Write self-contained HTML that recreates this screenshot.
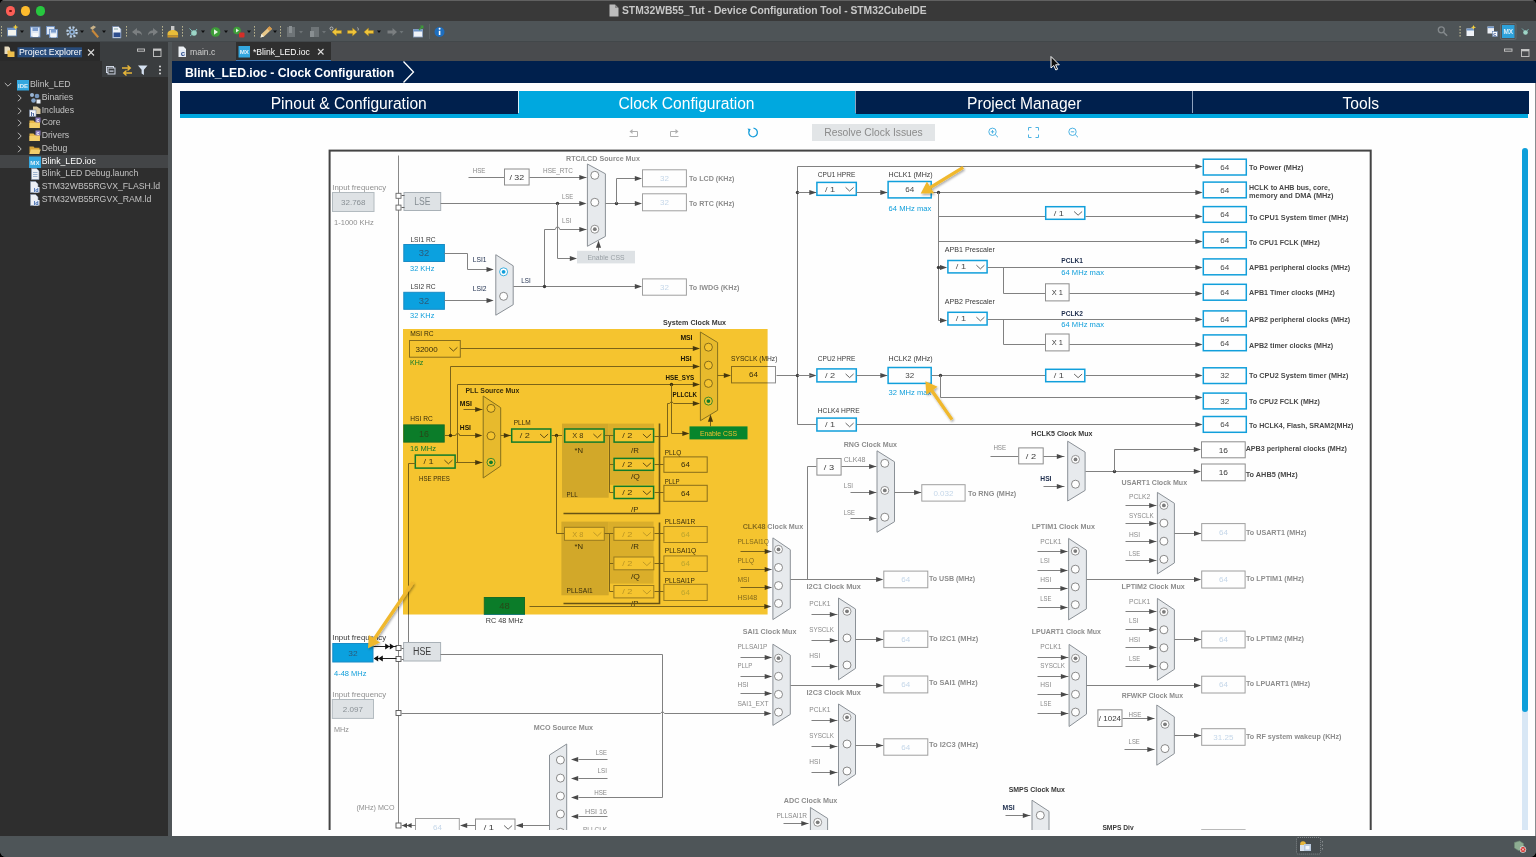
<!DOCTYPE html>
<html><head><meta charset="utf-8"><title>STM32CubeIDE</title>
<style>
*{box-sizing:border-box;margin:0;padding:0}
html,body{width:1536px;height:857px;overflow:hidden;background:#000}
body{font-family:"Liberation Sans",sans-serif;position:relative;color:#ccc}
.a{position:absolute}
.row,.t,.tab,#btn,.tx{will-change:transform}
#win{opacity:.9999;left:0;top:0;width:1536px;height:857px;background:#4f5558;border-radius:5px 5px 6px 6px;overflow:hidden}
#title{left:0;top:0;width:1536px;height:21.5px;background:#3a3a3a;border-top:1px solid #626262}
#title .t{left:622px;top:3.5px;font-size:10.3px;font-weight:700;color:#c9c9c9;white-space:nowrap;letter-spacing:0}
.tl{width:9.6px;height:9.6px;border-radius:50%;top:5.2px}
#toolbar{left:0;top:21px;width:1536px;height:21px;background:#4f5558;border-bottom:1px solid #43484b}
#side{left:0;top:42px;width:168px;height:794px;background:#2f2f2f}
#sidetab{left:0;top:42px;width:100px;height:19px;background:#2b2b2b}
#sidetabR{left:100px;top:42px;width:68px;height:19px;background:#3b3e40}
#sidetools{left:102px;top:61px;width:66px;height:16px;background:#3b3e40}
.row{left:0;width:168px;height:12.75px;font-size:8.7px;color:#c4c4c4;white-space:nowrap;line-height:12.75px}
.row span{position:absolute;top:0}
#gap{left:168px;top:42px;width:4px;height:794px;background:#515659}
#edtabs{left:172px;top:42px;width:1364px;height:19px;background:#4a4c4f}
#edtabA{left:235.5px;top:42px;width:95px;height:19px;background:#303030;border-bottom:1.5px solid #3f78b3}
#main{left:172px;top:61px;width:1364px;height:775px;background:#fff}
#navy{left:172px;top:61px;width:1364px;height:21.8px;background:#01214e}
#navy .t{left:13.3px;top:4.5px;font-size:12.2px;font-weight:700;color:#fff;white-space:nowrap}
#strip{left:180px;top:90.5px;width:1348px;height:27.3px;background:#00a9e0}
.tab{top:0;height:22.5px;background:#01214e;color:#fff;font-size:15.6px;text-align:center;line-height:25px;white-space:nowrap}
.tab.on{background:#00a9e0;height:27.3px}
.sepv{top:0;width:1px;height:22.5px;background:#d8f1fb}
#btn{left:811.6px;top:124px;width:123px;height:17px;background:#e3e6e8;color:#8c8c8c;font-size:10.3px;text-align:center;line-height:18.2px}
#status{left:0;top:836.5px;width:1536px;height:21px;background:#4f5659}
#track{left:1522.2px;top:160px;width:6.3px;height:669.5px;background:#d9e8f6}
#scroll{left:1522.2px;top:148px;width:6.3px;height:564px;background:#0fa0db;border-radius:3.2px}
</style></head>
<body>
<div id="win" class="a">
 <div id="title" class="a">
  <div class="a tl" style="left:5.8px;background:#fe5f57"></div>
  <div class="a" style="left:9.3px;top:8.7px;width:2.6px;height:2.6px;border-radius:50%;background:#7a1410"></div>
  <div class="a tl" style="left:20.7px;background:#febc2e"></div>
  <div class="a tl" style="left:35.6px;background:#28c840"></div>
  <svg class="a" style="left:609px;top:3px" width="10" height="13" viewBox="0 0 10 13"><path d="M0.5,0.5h5.5l3.5,3.5v8.5h-9z" fill="#bdbdbd"/><path d="M6,0.5v3.5h3.5z" fill="#8a8a8a"/></svg>
  <div class="a t">STM32WB55_Tut - Device Configuration Tool - STM32CubeIDE</div>
 </div>
 <div id="toolbar" class="a"><svg class="a" style="left:0;top:0" width="1536" height="21" viewBox="0 0 1536 21"><rect x="1" y="5" width="1" height="1.6" fill="#b9b48f"/><rect x="1" y="8" width="1" height="1.6" fill="#b9b48f"/><rect x="1" y="11" width="1" height="1.6" fill="#b9b48f"/><rect x="1" y="14" width="1" height="1.6" fill="#b9b48f"/><rect x="7.5" y="7" width="9" height="8" fill="#f4f4ee" stroke="#5d7fb0" stroke-width=".8"/><rect x="7.5" y="7" width="9" height="2" fill="#6f95c8"/><path d="M15.5,3.5l1,2 2,.5-2,.8-1,2-1-2-2-.8 2-.5z" fill="#f4d03f"/><path d="M20,9.5h4l-2,2.6z" fill="#111"/><rect x="30.5" y="6" width="9.5" height="10" fill="#dfe8f5" stroke="#6c8fc2" stroke-width=".9"/><rect x="32.5" y="6.5" width="5.5" height="3.5" fill="#7f9fd0"/><rect x="32.5" y="12" width="5.5" height="4" fill="#f6f8fb"/><rect x="46.5" y="5.5" width="8" height="8" fill="#dfe8f5" stroke="#6c8fc2" stroke-width=".8"/><rect x="49.5" y="8.5" width="8" height="8" fill="#dfe8f5" stroke="#6c8fc2" stroke-width=".8"/><rect x="51" y="9" width="5" height="2.6" fill="#7f9fd0"/><rect x="51" y="13" width="5" height="3.4" fill="#f6f8fb"/><circle cx="72" cy="11" r="4.6" fill="none" stroke="#b9cfe6" stroke-width="2.4" stroke-dasharray="2 1.6"/><circle cx="72" cy="11" r="3" fill="#8fb1d6"/><circle cx="72" cy="11" r="1.3" fill="#4f5558"/><path d="M80,9.5h4l-2,2.6z" fill="#111"/><path d="M90,7l3.5-2.5 2.5,1.5-3.5,3z" fill="#c9b38a"/><path d="M93,8.5l6,7-1.6,1.4-6-7z" fill="#c98a3c"/><path d="M102,9.5h4l-2,2.6z" fill="#111"/><path d="M112.5,5.5h6l2.5,2.5v9h-8.500z" fill="#f1f4f9" stroke="#6c84a8" stroke-width=".8"/><rect x="113.5" y="11.5" width="7" height="4.5" fill="#2f4f8f"/><rect x="114" y="7.5" width="4" height="1" fill="#8aa"/><rect x="126" y="5" width="1" height="1.6" fill="#b9b48f"/><rect x="126" y="8" width="1" height="1.6" fill="#b9b48f"/><rect x="126" y="11" width="1" height="1.6" fill="#b9b48f"/><rect x="126" y="14" width="1" height="1.6" fill="#b9b48f"/><path d="M132,11l5-4v2.5c3,0 5,1.5 5,5c-1-2-2.5-2.600-5-2.600v2.800z" fill="#7c8082"/><path d="M158,11l-5-4v2.500c-3,0-5,1.5-5,5c1-2 2.5-2.600 5-2.600v2.800z" fill="#7c8082"/><rect x="162" y="5" width="1" height="1.6" fill="#b9b48f"/><rect x="162" y="8" width="1" height="1.6" fill="#b9b48f"/><rect x="162" y="11" width="1" height="1.6" fill="#b9b48f"/><rect x="162" y="14" width="1" height="1.6" fill="#b9b48f"/><rect x="171" y="5" width="3.4" height="6" fill="#c9c9c9"/><path d="M167.5,13c0-3 3-4 5.300-4s5.300,1 5.300,4v1.500h-10.600z" fill="#e9bd3a"/><rect x="167.5" y="14.500" width="10.600" height="2" fill="#c9932a"/><rect x="182" y="5" width="1" height="1.6" fill="#b9b48f"/><rect x="182" y="8" width="1" height="1.6" fill="#b9b48f"/><rect x="182" y="11" width="1" height="1.6" fill="#b9b48f"/><rect x="182" y="14" width="1" height="1.6" fill="#b9b48f"/><circle cx="194" cy="12" r="2.800" fill="#9fd7c8"/><path d="M189.500,7.500l3,3M197,8l-2,2.500M190,15l2.500-2" stroke="#7fc4c0" stroke-width=".9"/><path d="M201,9.5h4l-2,2.6z" fill="#111"/><circle cx="215.500" cy="11" r="4.800" fill="#3f9e3a"/><path d="M214,8.200l4,2.800-4,2.800z" fill="#e9f6e6"/><path d="M224,9.5h4l-2,2.6z" fill="#111"/><circle cx="237" cy="9.500" r="3.800" fill="#3f9e3a"/><path d="M236,7.500l3,2-3,2z" fill="#e9f6e6"/><rect x="239" y="11.500" width="5.500" height="5" rx="1" fill="#d5302a"/><path d="M247,9.5h4l-2,2.6z" fill="#111"/><rect x="254" y="5" width="1" height="1.6" fill="#b9b48f"/><rect x="254" y="8" width="1" height="1.6" fill="#b9b48f"/><rect x="254" y="11" width="1" height="1.6" fill="#b9b48f"/><rect x="254" y="14" width="1" height="1.6" fill="#b9b48f"/><path d="M260.500,16.500l1-3.500 8-7.500 2.500,2.500-8,7.500z" fill="#e9c98a"/><path d="M260.500,16.500l1-3.500 2.500,2.500z" fill="#f6f1e0"/><path d="M267,7.500l2.500-2.300 2.500,2.500-2.500,2.300z" fill="#d99a4a"/><path d="M273,9.5h4l-2,2.6z" fill="#111"/><rect x="280" y="5" width="1" height="1.6" fill="#b9b48f"/><rect x="280" y="8" width="1" height="1.6" fill="#b9b48f"/><rect x="280" y="11" width="1" height="1.6" fill="#b9b48f"/><rect x="280" y="14" width="1" height="1.6" fill="#b9b48f"/><rect x="287" y="6" width="8" height="10" fill="#6f7578"/><rect x="289" y="5" width="3" height="7" fill="#8a9093"/><path d="M299,10h4l-2,2.400z" fill="#6f7578"/><rect x="311" y="6" width="8" height="10" fill="#6f7578"/><rect x="310" y="10" width="4" height="6" fill="#8a9093"/><path d="M322,10h4l-2,2.400z" fill="#6f7578"/><path d="M332,11l4.500-4v2.600h5v2.800h-5v2.600z" fill="#f2c73c" stroke="#a9811a" stroke-width=".4"/><circle cx="331.500" cy="7.500" r="1.500" fill="none" stroke="#ddd" stroke-width=".7"/><path d="M357,11l-4.500-4v2.600h-5v2.800h5v2.600z" fill="#f2c73c" stroke="#a9811a" stroke-width=".4"/><path d="M357,6.500a2,2 0 0 1 1,3" fill="none" stroke="#ccc" stroke-width=".7"/><path d="M364,11l4.500-4v2.600h5v2.800h-5v2.600z" fill="#f2c73c" stroke="#a9811a" stroke-width=".4"/><path d="M377,9.5h4l-2,2.6z" fill="#111"/><path d="M397,11l-4.500-4v2.600h-5v2.800h5v2.600z" fill="#7c8082"/><path d="M399.500,10h4l-2,2.400z" fill="#6f7578"/><rect x="413.500" y="8.500" width="9" height="7.500" fill="#f1f4f9" stroke="#8fa6c6" stroke-width=".8"/><rect x="413.500" y="8.500" width="9" height="2" fill="#6f95c8"/><path d="M419,9l3.500-3.500M420.300,5h2.500v2.500" stroke="#3f9e3a" stroke-width="1.200" fill="none"/><rect x="429" y="3" width="1" height="15" fill="#5e6467"/><circle cx="439.500" cy="11" r="5" fill="#1f6fbf"/><rect x="438.800" y="9.800" width="1.600" height="4.200" fill="#fff"/><circle cx="439.600" cy="7.800" r="1" fill="#fff"/><circle cx="1441.300" cy="8.800" r="3" fill="none" stroke="#858a8d" stroke-width="1.300"/><path d="M1443.500,11.200l3.600,3.600" stroke="#858a8d" stroke-width="1.600"/><rect x="1459.500" y="5" width="1.200" height="1.600" fill="#b9b48f"/><rect x="1459.500" y="8" width="1.200" height="1.600" fill="#b9b48f"/><rect x="1459.500" y="11" width="1.200" height="1.600" fill="#b9b48f"/><rect x="1459.500" y="14" width="1.200" height="1.600" fill="#b9b48f"/><rect x="1466.500" y="7.500" width="7.500" height="7.500" fill="#f1f4f9"/><rect x="1466.500" y="7.500" width="7.500" height="2" fill="#6f95c8"/><path d="M1473.500,4l.8,1.800 1.800,.5-1.800,.6-.8,1.800-.8-1.800-1.800-.6 1.800-.5z" fill="#f4d03f"/><rect x="1487.500" y="5.500" width="6.500" height="7" fill="#eef1f6"/><rect x="1487.500" y="5.500" width="6.500" height="1.600" fill="#6f95c8"/><rect x="1492.500" y="10.500" width="5" height="5" fill="#f6f8fb" stroke="#5e7fae" stroke-width=".6"/><text x="1493.300" y="14.800" font-size="5" font-weight="700" fill="#2f4f8f" font-family="Liberation Sans">c</text><rect x="1500.500" y="2.500" width="15.500" height="16" rx="1.500" fill="none" stroke="#6a7073" stroke-width=".8"/><rect x="1502" y="4" width="12.500" height="13" fill="#2fa3dc"/><text x="1508.300" y="13.300" font-size="6.500" font-weight="700" fill="#d9eef9" text-anchor="middle" font-family="Liberation Sans">MX</text><circle cx="1525.500" cy="11.500" r="2.300" fill="#9fd7c8"/><path d="M1522,7.500l2.500,2.500M1528.500,8l-1.500,2" stroke="#7fc4c0" stroke-width=".8"/></svg></div>
 <div id="side" class="a"></div>
 <div id="sidetab" class="a"></div>
 <div id="sidetabR" class="a"></div>
 <div id="sidetools" class="a"></div>
 <svg class="a" style="left:0;top:42px" width="172" height="36" viewBox="0 0 172 36"><path d="M4.500,4.500h4l1.500,1.500v6h-5.500z" fill="#e8dcc0"/><rect x="7.500" y="9.500" width="7" height="5.500" fill="#f0c04c"/><rect x="7.500" y="8.500" width="3" height="1.500" fill="#f0c04c"/><rect x="17.500" y="5.300" width="64.500" height="10" fill="#2a4d7c"/><path d="M88,7.500l6,6M94,7.500l-6,6" stroke="#ddd" stroke-width="1.100"/><rect x="137.500" y="7" width="7" height="2.200" fill="none" stroke="#c8c8c8" stroke-width=".9"/><rect x="153.500" y="7" width="7.500" height="7.500" fill="none" stroke="#c8c8c8" stroke-width=".9"/><rect x="153.500" y="7" width="7.500" height="1.800" fill="#c8c8c8"/><rect x="106.500" y="24.500" width="7" height="6" fill="none" stroke="#cfd6e4" stroke-width="1"/><rect x="108" y="26" width="7" height="6" fill="#3b3e40" stroke="#cfd6e4" stroke-width="1"/><rect x="109.500" y="28.500" width="4" height="1.200" fill="#cfd6e4"/><path d="M122,26h8M127.500,23.500l2.800,2.500-2.800,2.500M132,31h-8M126.500,28.500l-2.800,2.500 2.800,2.500" fill="none" stroke="#e8b73a" stroke-width="1.400"/><path d="M138,23.500h9.500l-3.600,4.300v5.200l-2.300-1.500v-3.700z" fill="#d6e2f2"/><circle cx="160" cy="24.500" r="1" fill="#ddd"/><circle cx="160" cy="28" r="1" fill="#ddd"/><circle cx="160" cy="31.500" r="1" fill="#ddd"/></svg><svg class="a" style="left:1512px;top:839px" width="18" height="16" viewBox="0 0 18 16"><path d="M2.500,3.500l5-1.500 4,2.500v5.500l-5,1.500-4-2.500z" fill="#8fae93" stroke="#6f8f76" stroke-width=".6"/><circle cx="11" cy="10.500" r="3.200" fill="#e8e8e8"/><circle cx="11" cy="10.500" r="2.500" fill="#d5302a"/><path d="M9.800,9.300l2.400,2.400M12.200,9.300l-2.400,2.400" stroke="#fff" stroke-width=".8"/></svg><div class="a tx" style="left:18.800px;top:46.500px;font-size:8.800px;color:#fff;white-space:nowrap">Project Explorer</div><div class="a row" style="top:78.00px;"><svg class="a" style="left:3.5px;top:3.500px" width="8" height="6"><path d="M.8,1l3.200,3.200 3.200-3.200" fill="none" stroke="#bbb" stroke-width="1"/></svg><svg class="a" style="left:16.5px;top:.500px" width="12" height="12" viewBox="0 0 12 12"><rect x="0" y="1" width="12" height="10.500" fill="#35a8e0"/><text x="6" y="8.800" font-size="6" font-weight="700" fill="#dff1fb" text-anchor="middle" font-family="Liberation Sans">IDE</text></svg><span style="left:30px">Blink_LED</span></div><div class="a row" style="top:90.75px;"><svg class="a" style="left:17.2px;top:2.500px" width="6" height="8"><path d="M1,.8l3.200,3.200-3.200,3.200" fill="none" stroke="#bbb" stroke-width="1"/></svg><svg class="a" style="left:28.6px;top:.500px" width="12" height="12" viewBox="0 0 12 12"><circle cx="3" cy="3" r="2" fill="#9db7d6"/><circle cx="8" cy="4" r="2.300" fill="#7a9ac2"/><circle cx="4.500" cy="8.500" r="2.300" fill="#86a6cc"/><rect x="7.500" y="7.500" width="4" height="4" fill="#e9eef5"/></svg><span style="left:41.7px">Binaries</span></div><div class="a row" style="top:103.50px;"><svg class="a" style="left:17.2px;top:2.500px" width="6" height="8"><path d="M1,.8l3.200,3.200-3.200,3.200" fill="none" stroke="#bbb" stroke-width="1"/></svg><svg class="a" style="left:28.6px;top:.500px" width="12" height="12" viewBox="0 0 12 12"><path d="M4,1.500h4l3.500,2.500v5h-7.500z" fill="#d9c9a0"/><rect x=".5" y="5" width="6.500" height="6.500" fill="#f4f6fa" stroke="#7a8aa6" stroke-width=".6"/><text x="3.700" y="10.500" font-size="6" font-weight="700" fill="#2f4f8f" text-anchor="middle" font-family="Liberation Sans">h</text></svg><span style="left:41.7px">Includes</span></div><div class="a row" style="top:116.25px;"><svg class="a" style="left:17.2px;top:2.500px" width="6" height="8"><path d="M1,.8l3.200,3.200-3.200,3.200" fill="none" stroke="#bbb" stroke-width="1"/></svg><svg class="a" style="left:28.6px;top:.500px" width="12" height="12" viewBox="0 0 12 12"><path d="M.5,3.500h4l1,1.200h5.500v6.300h-10.500z" fill="#e8b84a"/><path d="M.5,6h10.500l-.8,5h-9.700z" fill="#f4cf6c"/><rect x="6.500" y=".5" width="5" height="5" fill="#8d7fc0"/><text x="9" y="4.800" font-size="5" font-weight="700" fill="#fff" text-anchor="middle" font-family="Liberation Sans">c</text></svg><span style="left:41.7px">Core</span></div><div class="a row" style="top:129.00px;"><svg class="a" style="left:17.2px;top:2.500px" width="6" height="8"><path d="M1,.8l3.200,3.200-3.200,3.200" fill="none" stroke="#bbb" stroke-width="1"/></svg><svg class="a" style="left:28.6px;top:.500px" width="12" height="12" viewBox="0 0 12 12"><path d="M.5,3.500h4l1,1.200h5.500v6.300h-10.500z" fill="#e8b84a"/><path d="M.5,6h10.500l-.8,5h-9.700z" fill="#f4cf6c"/><rect x="6.500" y=".5" width="5" height="5" fill="#8d7fc0"/><text x="9" y="4.800" font-size="5" font-weight="700" fill="#fff" text-anchor="middle" font-family="Liberation Sans">c</text></svg><span style="left:41.7px">Drivers</span></div><div class="a row" style="top:141.75px;"><svg class="a" style="left:17.2px;top:2.500px" width="6" height="8"><path d="M1,.8l3.200,3.200-3.200,3.200" fill="none" stroke="#bbb" stroke-width="1"/></svg><svg class="a" style="left:28.6px;top:.500px" width="12" height="12" viewBox="0 0 12 12"><path d="M.5,3.500h4l1,1.200h5v6.300h-10z" fill="#d9a53a"/><path d="M2,6.500h9.800l-1.800,4.500h-9.500z" fill="#f4cf6c"/></svg><span style="left:41.7px">Debug</span></div><div class="a row" style="top:154.50px;background:#444648;color:#fff;"><svg class="a" style="left:28.6px;top:.500px" width="12" height="12" viewBox="0 0 12 12"><rect x="0" y=".5" width="12" height="11.500" fill="#35a8e0"/><text x="6" y="8.500" font-size="6.200" font-weight="700" fill="#dff1fb" text-anchor="middle" font-family="Liberation Sans">MX</text></svg><span style="left:41.7px">Blink_LED.ioc</span></div><div class="a row" style="top:167.25px;"><svg class="a" style="left:28.6px;top:.500px" width="12" height="12" viewBox="0 0 12 12"><path d="M2.500,.5h5l2.500,2.500v8.500h-7.500z" fill="#eef1f6" stroke="#8a9ab6" stroke-width=".6"/><path d="M4,4.500h4.500M4,6.500h4.500M4,8.500h4.500" stroke="#7a9ac2" stroke-width=".7"/></svg><span style="left:41.7px">Blink_LED Debug.launch</span></div><div class="a row" style="top:180.00px;"><svg class="a" style="left:28.6px;top:.500px" width="12" height="12" viewBox="0 0 12 12"><path d="M1.500,.5h5l2.500,2.500v8.500h-7.500z" fill="#eef1f6" stroke="#8a9ab6" stroke-width=".6"/><rect x="4.500" y="6" width="6" height="5.500" fill="#e9eef8"/><text x="7.300" y="10.800" font-size="5.500" font-weight="700" fill="#2f5fa8" text-anchor="middle" font-family="Liberation Sans">ld</text></svg><span style="left:41.7px">STM32WB55RGVX_FLASH.ld</span></div><div class="a row" style="top:192.75px;"><svg class="a" style="left:28.6px;top:.500px" width="12" height="12" viewBox="0 0 12 12"><path d="M1.500,.5h5l2.500,2.500v8.500h-7.500z" fill="#eef1f6" stroke="#8a9ab6" stroke-width=".6"/><rect x="4.500" y="6" width="6" height="5.500" fill="#e9eef8"/><text x="7.300" y="10.800" font-size="5.500" font-weight="700" fill="#2f5fa8" text-anchor="middle" font-family="Liberation Sans">ld</text></svg><span style="left:41.7px">STM32WB55RGVX_RAM.ld</span></div>
 <div id="gap" class="a"></div>
 <div id="edtabs" class="a"></div>
 <div id="edtabA" class="a"></div>
 <svg class="a" style="left:172px;top:42px" width="200" height="19" viewBox="0 0 200 19"><path d="M6.500,4.500h5l2.500,2.500v8h-7.500z" fill="#eef1f6"/><rect x="8" y="8" width="6" height="6.500" fill="#e6ecf6"/><text x="11" y="14" font-size="8" font-weight="700" fill="#2f4f8f" text-anchor="middle" font-family="Liberation Sans">c</text><rect x="66.500" y="4" width="11.500" height="11.500" fill="#35a8e0"/><text x="72.300" y="12.300" font-size="6.200" font-weight="700" fill="#dff1fb" text-anchor="middle" font-family="Liberation Sans">MX</text><path d="M146,7l5.500,5.500M151.500,7l-5.500,5.500" stroke="#ddd" stroke-width="1.100"/></svg><svg class="a" style="left:1512px;top:839px" width="18" height="16" viewBox="0 0 18 16"><path d="M2.500,3.500l5-1.500 4,2.500v5.500l-5,1.500-4-2.500z" fill="#8fae93" stroke="#6f8f76" stroke-width=".6"/><circle cx="11" cy="10.500" r="3.200" fill="#e8e8e8"/><circle cx="11" cy="10.500" r="2.500" fill="#d5302a"/><path d="M9.800,9.300l2.400,2.400M12.200,9.300l-2.400,2.400" stroke="#fff" stroke-width=".8"/></svg><div class="a tx" style="left:190.300px;top:47.400px;font-size:8.600px;color:#d0d0d0;white-space:nowrap">main.c</div><div class="a tx" style="left:253.300px;top:47.400px;font-size:8.600px;color:#fff;white-space:nowrap">*Blink_LED.ioc</div><svg class="a" style="left:1500px;top:42px" width="36" height="19" viewBox="0 0 36 19"><rect x="4.500" y="7" width="7.500" height="2.200" fill="none" stroke="#c8c8c8" stroke-width=".9"/><rect x="21.500" y="7.500" width="7.500" height="7" fill="none" stroke="#c8c8c8" stroke-width=".9"/><rect x="21.500" y="7.500" width="7.500" height="1.800" fill="#c8c8c8"/></svg>
 <div id="main" class="a"></div><div class="a" style="left:1535px;top:61px;width:1px;height:775px;background:#8a8d90"></div>
 <div id="navy" class="a"><div class="a t">Blink_LED.ioc - Clock Configuration</div>
  <svg class="a" style="left:229px;top:0" width="16" height="22" viewBox="0 0 16 22"><path d="M2.5,0.5 L12.5,11 L2.5,21.5" fill="none" stroke="#fff" stroke-width="1.3"/></svg>
 </div>
 <div id="strip" class="a">
  <div class="a tab" style="left:0;width:337.5px">Pinout &amp; Configuration</div>
  <div class="a tab on" style="left:338px;width:337px">Clock Configuration</div>
  <div class="a tab" style="left:675.5px;width:336.5px">Project Manager</div>
  <div class="a tab" style="left:1012.5px;width:335.5px">Tools</div>
  <div class="a sepv" style="left:337.7px"></div><div class="a sepv" style="left:675px;background:#8fa3bf"></div><div class="a sepv" style="left:1012px;background:#8fa3bf"></div>
 </div>
 <div id="btn" class="a">Resolve Clock Issues</div>
 <svg class="a" style="left:600px;top:118px" width="500" height="32" viewBox="0 0 500 32"><path d="M30,13.500h7.500v5h-8" fill="none" stroke="#b0b0b0" stroke-width="1"/><path d="M32.500,11l-3,2.500 3,2.500z" fill="#b0b0b0"/><path d="M78,13.500h-7.500v5h8" fill="none" stroke="#b0b0b0" stroke-width="1"/><path d="M75.500,11l3,2.500-3,2.500z" fill="#b0b0b0"/><path d="M153.500,10.200a4.300,4.300 0 1 1-4.200,2.200" fill="none" stroke="#1a9fdb" stroke-width="1.300"/><path d="M147.500,10.500l3.200,.6-1.300,2.800z" fill="#1a9fdb"/><circle cx="392.500" cy="13.800" r="3.700" fill="none" stroke="#4fb4e4" stroke-width="1"/><path d="M395.200,16.500l2.800,2.800M390.800,13.800h3.400M392.500,12.100v3.400" stroke="#4fb4e4" stroke-width="1"/><path d="M428.500,12.500v-3h3M435.500,9.500h3v3M438.500,16.500v3h-3M431.500,19.500h-3v-3" fill="none" stroke="#4fb4e4" stroke-width="1"/><circle cx="472.500" cy="13.800" r="3.700" fill="none" stroke="#4fb4e4" stroke-width="1"/><path d="M475.200,16.500l2.800,2.800M470.800,13.800h3.400" stroke="#4fb4e4" stroke-width="1"/></svg>
 <div id="track" class="a"></div><div id="scroll" class="a"></div>
 <svg width="1536" height="857" viewBox="0 0 1536 857" style="position:absolute;left:0;top:0" font-family="Liberation Sans, sans-serif">
<defs><clipPath id="vp"><rect x="328" y="149" width="1045" height="681"/></clipPath><filter id="sh" x="-30%" y="-30%" width="160%" height="160%"><feDropShadow dx="1" dy="1.5" stdDeviation="1.2" flood-color="#000" flood-opacity="0.35"/></filter></defs>
<g clip-path="url(#vp)">
<rect x="329.6" y="150.6" width="1041.1" height="700" fill="#fff" stroke="#454545" stroke-width="2"/>
<polyline points="398.5,155.5 398.5,826.5" fill="none" stroke="#8a8a8a" stroke-width="1"/>
<polyline points="408.5,463.5 408.5,643.5" fill="none" stroke="#808080" stroke-width="1"/>
<text x="332.3" y="190.02" font-size="7.0" fill="#909090" textLength="53.87" lengthAdjust="spacingAndGlyphs">Input frequency</text>
<rect x="332.5" y="192.5" width="41.5" height="19" fill="#dfe3e6" stroke="#b4bcc1" stroke-width="1" />
<text x="353.25" y="204.77" font-size="7.7" fill="#8a9196" text-anchor="middle" textLength="24.62" lengthAdjust="spacingAndGlyphs">32.768</text>
<text x="334" y="224.52" font-size="7.0" fill="#909090" textLength="39.77" lengthAdjust="spacingAndGlyphs">1-1000 KHz</text>
<rect x="404" y="192.5" width="36.7" height="18" fill="#dfe3e6" stroke="#aab2b8" stroke-width="1" />
<text x="422.3" y="205.1" font-size="10" fill="#868e94" text-anchor="middle" textLength="16.2" lengthAdjust="spacingAndGlyphs">LSE</text>
<rect x="396" y="193.3" width="5" height="5" fill="#fff" stroke="#666" stroke-width="0.9" />
<polyline points="401.5,195.5 404.5,195.5" fill="none" stroke="#666" stroke-width="1"/>
<rect x="396" y="205.1" width="5" height="5" fill="#fff" stroke="#666" stroke-width="0.9" />
<polyline points="401.5,207.5 404.5,207.5" fill="none" stroke="#666" stroke-width="1"/>
<text x="603" y="161.12" font-size="7.0" fill="#8e8e8e" font-weight="700" text-anchor="middle" textLength="73.83" lengthAdjust="spacingAndGlyphs">RTC/LCD Source Mux</text>
<text x="472.7" y="173.32" font-size="7.0" fill="#8a8a8a" textLength="12.74" lengthAdjust="spacingAndGlyphs">HSE</text>
<polyline points="468.5,177.5 504.5,177.5" fill="none" stroke="#828282" stroke-width="1"/>
<rect x="504.5" y="169" width="24.6" height="16" fill="#fff" stroke="#8e8e8e" stroke-width="1" />
<text x="516.8" y="179.77" font-size="7.7" fill="#3a3a3a" text-anchor="middle" textLength="14.71" lengthAdjust="spacingAndGlyphs">/ 32</text>
<text x="543" y="173.32" font-size="7.0" fill="#8a8a8a" textLength="29.79" lengthAdjust="spacingAndGlyphs">HSE_RTC</text>
<polyline points="529.5,177.5 586.5,177.5" fill="none" stroke="#828282" stroke-width="1"/>
<polygon points="586.5,177.5 579.3,174.9 579.3,180.1" fill="#4a4a4a"/>
<polygon points="587.4,164 605.4,173.8 605.4,236.4 587.4,246.3" fill="#e8ebee" stroke="#8c9298" stroke-width="1"/>
<circle cx="594.8" cy="175.3" r="4" fill="#fff" stroke="#707070" stroke-width="0.8"/>
<circle cx="594.8" cy="202.3" r="4" fill="#fff" stroke="#707070" stroke-width="0.8"/>
<circle cx="594.8" cy="229.2" r="4" fill="#fff" stroke="#7c7c7c" stroke-width="0.8"/>
<circle cx="594.8" cy="229.2" r="1.9" fill="#7c7c7c"/>
<polyline points="440.5,203.5 580.5,203.5" fill="none" stroke="#828282" stroke-width="1"/>
<polygon points="586.5,203.5 579.3,200.9 579.3,206.1" fill="#4a4a4a"/>
<circle cx="557.5" cy="203.5" r="1.7" fill="#3c3c3c"/>
<text x="562" y="199.32" font-size="7.0" fill="#8a8a8a" textLength="11.17" lengthAdjust="spacingAndGlyphs">LSE</text>
<text x="562" y="222.82" font-size="7.0" fill="#8a8a8a" textLength="9.4" lengthAdjust="spacingAndGlyphs">LSI</text>
<polyline points="544.5,286.5 544.5,229.5 555.5,229.5" fill="none" stroke="#828282" stroke-width="1"/>
<path d="M555.5,229 a2,2 0 0 1 4,0" fill="none" stroke="#828282"/>
<polyline points="559.5,229.5 586.5,229.5" fill="none" stroke="#828282" stroke-width="1"/>
<polygon points="586.5,229.5 579.3,226.9 579.3,232.1" fill="#4a4a4a"/>
<polyline points="557.5,203.5 557.5,258.5 570.5,258.5" fill="none" stroke="#828282" stroke-width="1"/>
<polygon points="577,258.5 569.8,255.9 569.8,261.1" fill="#4a4a4a"/>
<rect x="577" y="250.8" width="58" height="12.6" fill="#dfe3e6" stroke="none" stroke-width="1" />
<text x="606" y="259.6" font-size="7.0" fill="#9aa1a6" text-anchor="middle" textLength="37.16" lengthAdjust="spacingAndGlyphs">Enable CSS</text>
<polyline points="598.5,250.5 598.5,246.5" fill="none" stroke="#828282" stroke-width="1"/>
<polygon points="598.5,240.5 595.9,247.7 601.1,247.7" fill="#4a4a4a"/>
<polyline points="605.5,203.5 636.5,203.5" fill="none" stroke="#828282" stroke-width="1"/>
<polygon points="642,203.5 634.8,200.9 634.8,206.1" fill="#4a4a4a"/>
<circle cx="616.5" cy="203.5" r="1.7" fill="#3c3c3c"/>
<polyline points="616.5,203.5 616.5,178.5 636.5,178.5" fill="none" stroke="#828282" stroke-width="1"/>
<polygon points="642,178.5 634.8,175.9 634.8,181.1" fill="#4a4a4a"/>
<rect x="642.5" y="169.8" width="43.9" height="17" fill="#fff" stroke="#a0a0a0" stroke-width="1" />
<text x="664.45" y="181.07" font-size="7.7" fill="#c6d8ea" text-anchor="middle" textLength="8.95" lengthAdjust="spacingAndGlyphs">32</text>
<text x="689" y="180.82" font-size="7.0" fill="#8e8e8e" font-weight="700" textLength="45.45" lengthAdjust="spacingAndGlyphs">To LCD (KHz)</text>
<rect x="642.5" y="193.8" width="43.9" height="17" fill="#fff" stroke="#a0a0a0" stroke-width="1" />
<text x="664.45" y="205.07" font-size="7.7" fill="#c6d8ea" text-anchor="middle" textLength="8.95" lengthAdjust="spacingAndGlyphs">32</text>
<text x="689" y="205.82" font-size="7.0" fill="#8e8e8e" font-weight="700" textLength="45.42" lengthAdjust="spacingAndGlyphs">To RTC (KHz)</text>
<text x="410.4" y="242.12" font-size="7.0" fill="#3a3a3a" textLength="25.24" lengthAdjust="spacingAndGlyphs">LSI1 RC</text>
<rect x="403.8" y="244.5" width="40.6" height="17" fill="#0ca2e0" stroke="#1a8cc6" stroke-width="1" />
<text x="424.1" y="256.24" font-size="9" fill="#2b5d7c" text-anchor="middle" textLength="10.47" lengthAdjust="spacingAndGlyphs">32</text>
<text x="410" y="271.22" font-size="7.0" fill="#12a0dc" textLength="24.39" lengthAdjust="spacingAndGlyphs">32 KHz</text>
<text x="410.4" y="288.72" font-size="7.0" fill="#3a3a3a" textLength="25.24" lengthAdjust="spacingAndGlyphs">LSI2 RC</text>
<rect x="403.8" y="292.3" width="40.6" height="17" fill="#0ca2e0" stroke="#1a8cc6" stroke-width="1" />
<text x="424.1" y="304.04" font-size="9" fill="#2b5d7c" text-anchor="middle" textLength="10.47" lengthAdjust="spacingAndGlyphs">32</text>
<text x="410" y="318.12" font-size="7.0" fill="#12a0dc" textLength="24.39" lengthAdjust="spacingAndGlyphs">32 KHz</text>
<text x="472.7" y="261.52" font-size="7.0" fill="#1c2c4c" textLength="13.82" lengthAdjust="spacingAndGlyphs">LSI1</text>
<text x="472.7" y="290.82" font-size="7.0" fill="#1c2c4c" textLength="13.82" lengthAdjust="spacingAndGlyphs">LSI2</text>
<polyline points="444.5,253.5 467.5,253.5 467.5,269.5 488.5,269.5" fill="none" stroke="#828282" stroke-width="1"/>
<polygon points="493.7,269.5 486.5,266.9 486.5,272.1" fill="#4a4a4a"/>
<polyline points="444.5,300.5 488.5,300.5" fill="none" stroke="#828282" stroke-width="1"/>
<polygon points="493.7,300.5 486.5,297.9 486.5,303.1" fill="#4a4a4a"/>
<polygon points="495.8,254.7 513.2,265.8 513.2,304.7 495.8,315.2" fill="#e8ebee" stroke="#8c9298" stroke-width="1"/>
<circle cx="503.6" cy="271.8" r="4" fill="#fff" stroke="#12a0dc" stroke-width="0.8"/>
<circle cx="503.6" cy="271.8" r="1.9" fill="#12a0dc"/>
<circle cx="503.6" cy="296.3" r="4" fill="#fff" stroke="#707070" stroke-width="0.8"/>
<text x="521.3" y="283.32" font-size="7.0" fill="#1c2c4c" textLength="9.4" lengthAdjust="spacingAndGlyphs">LSI</text>
<polyline points="513.5,286.5 636.5,286.5" fill="none" stroke="#828282" stroke-width="1"/>
<polygon points="642,286.5 634.8,283.9 634.8,289.1" fill="#4a4a4a"/>
<circle cx="544.5" cy="286.5" r="1.7" fill="#3c3c3c"/>
<rect x="642.5" y="278.9" width="43.9" height="16.3" fill="#fff" stroke="#a0a0a0" stroke-width="1" />
<text x="664.45" y="289.82" font-size="7.7" fill="#c6d8ea" text-anchor="middle" textLength="8.95" lengthAdjust="spacingAndGlyphs">32</text>
<text x="689" y="289.52" font-size="7.0" fill="#8e8e8e" font-weight="700" textLength="50.42" lengthAdjust="spacingAndGlyphs">To IWDG (KHz)</text>
<text x="663" y="324.52" font-size="7.0" fill="#3a3a3a" font-weight="700" textLength="63.1" lengthAdjust="spacingAndGlyphs">System Clock Mux</text>
<text x="410.3" y="335.72" font-size="7.0" fill="#3a3a3a" textLength="23.29" lengthAdjust="spacingAndGlyphs">MSI RC</text>
<rect x="409.5" y="340.5" width="50.8" height="16.7" fill="#fff" stroke="#8e8e8e" stroke-width="1" />
<text x="426.61" y="351.62" font-size="7.7" fill="#3a3a3a" text-anchor="middle" textLength="22.39" lengthAdjust="spacingAndGlyphs">32000</text>
<polyline points="449.4,347.35 453.4,351.05 457.4,347.35" fill="none" stroke="#555" stroke-width="0.9"/>
<text x="410" y="364.52" font-size="7.0" fill="#12a0dc" textLength="13.33" lengthAdjust="spacingAndGlyphs">KHz</text>
<polyline points="460.5,348.5 694.5,348.5" fill="none" stroke="#828282" stroke-width="1"/>
<polygon points="700,348.5 692.8,345.9 692.8,351.1" fill="#4a4a4a"/>
<polygon points="700.4,332 717.6,342.5 717.6,410.3 700.4,420.7" fill="#f1f3f5" stroke="#8c9298" stroke-width="1"/>
<circle cx="708.4" cy="347.2" r="4" fill="#fff" stroke="#707070" stroke-width="0.8"/>
<circle cx="708.4" cy="365.2" r="4" fill="#fff" stroke="#707070" stroke-width="0.8"/>
<circle cx="708.4" cy="383.4" r="4" fill="#fff" stroke="#707070" stroke-width="0.8"/>
<circle cx="708.4" cy="401.1" r="4" fill="#fff" stroke="#12a0dc" stroke-width="0.8"/>
<circle cx="708.4" cy="401.1" r="1.9" fill="#12a0dc"/>
<text x="680.4" y="339.5" font-size="7.0" fill="#222" font-weight="700" textLength="12.11" lengthAdjust="spacingAndGlyphs">MSI</text>
<text x="680.4" y="361" font-size="7.0" fill="#222" font-weight="700" textLength="11.19" lengthAdjust="spacingAndGlyphs">HSI</text>
<text x="665.5" y="379.7" font-size="7.0" fill="#222" font-weight="700" textLength="28.67" lengthAdjust="spacingAndGlyphs">HSE_SYS</text>
<text x="672.6" y="397.3" font-size="7.0" fill="#222" font-weight="700" textLength="24.38" lengthAdjust="spacingAndGlyphs">PLLCLK</text>
<polyline points="450.5,435.5 450.5,366.5 694.5,366.5" fill="none" stroke="#828282" stroke-width="1"/>
<polygon points="700,366.5 692.8,363.9 692.8,369.1" fill="#4a4a4a"/>
<polyline points="457.5,462.5 457.5,384.5 694.5,384.5" fill="none" stroke="#828282" stroke-width="1"/>
<polygon points="700,384.5 692.8,381.9 692.8,387.1" fill="#4a4a4a"/>
<circle cx="671.5" cy="384.5" r="1.7" fill="#3c3c3c"/>
<polyline points="671.5,384.5 671.5,433.5 683.5,433.5" fill="none" stroke="#828282" stroke-width="1"/>
<polygon points="689.5,433.5 682.3,430.9 682.3,436.1" fill="#4a4a4a"/>
<polyline points="654.5,436.5 667.5,436.5 667.5,403.5 669.5,403.5" fill="none" stroke="#828282" stroke-width="1"/>
<path d="M669.5,403.5 l2,-2.200 l2,2.200" fill="none" stroke="#828282"/>
<polyline points="673.5,403.5 694.5,403.5" fill="none" stroke="#828282" stroke-width="1"/>
<polygon points="700,403.5 692.8,400.9 692.8,406.1" fill="#4a4a4a"/>
<polyline points="717.5,375.5 725.5,375.5" fill="none" stroke="#828282" stroke-width="1"/>
<polygon points="731,375.5 723.8,372.9 723.8,378.1" fill="#4a4a4a"/>
<text x="731" y="360.92" font-size="7.0" fill="#3a3a3a" textLength="46.38" lengthAdjust="spacingAndGlyphs">SYSCLK (MHz)</text>
<rect x="731.5" y="366.5" width="44" height="16.4" fill="#fff" stroke="#8e8e8e" stroke-width="1" />
<text x="753.5" y="377.47" font-size="7.7" fill="#3a3a3a" text-anchor="middle" textLength="8.95" lengthAdjust="spacingAndGlyphs">64</text>
<polyline points="776.5,375.5 797.5,375.5" fill="none" stroke="#828282" stroke-width="1"/>
<rect x="689.5" y="426.4" width="58" height="13" fill="#08aef0" stroke="none" stroke-width="1" />
<text x="718.5" y="435.5" font-size="7.0" fill="#eef6fb" text-anchor="middle" textLength="37.16" lengthAdjust="spacingAndGlyphs">Enable CSS</text>
<polyline points="710.5,426.5 710.5,420.5" fill="none" stroke="#828282" stroke-width="1"/>
<polygon points="710.5,414.5 707.9,421.7 713.1,421.7" fill="#4a4a4a"/>
<text x="465.5" y="393.22" font-size="7.0" fill="#3a3a3a" font-weight="700" textLength="53.88" lengthAdjust="spacingAndGlyphs">PLL Source Mux</text>
<text x="459.8" y="405.7" font-size="7.0" fill="#222" font-weight="700" textLength="12.11" lengthAdjust="spacingAndGlyphs">MSI</text>
<polyline points="463.5,409.5 482.5,409.5" fill="none" stroke="#828282" stroke-width="1"/>
<polygon points="482.4,409.5 475.2,406.9 475.2,412.1" fill="#4a4a4a"/>
<polygon points="483.2,396 500.7,407.7 500.7,466 483.2,478" fill="#f1f3f5" stroke="#8c9298" stroke-width="1"/>
<circle cx="491" cy="408.4" r="4" fill="#fff" stroke="#707070" stroke-width="0.8"/>
<circle cx="491" cy="435.8" r="4" fill="#fff" stroke="#707070" stroke-width="0.8"/>
<circle cx="491" cy="462.3" r="4" fill="#fff" stroke="#12a0dc" stroke-width="0.8"/>
<circle cx="491" cy="462.3" r="1.9" fill="#12a0dc"/>
<text x="410.3" y="420.52" font-size="7.0" fill="#3a3a3a" textLength="22.39" lengthAdjust="spacingAndGlyphs">HSI RC</text>
<rect x="403.8" y="424.9" width="40.4" height="17.2" fill="#0ca2e0" stroke="#1a8cc6" stroke-width="1" />
<text x="424" y="436.56" font-size="8.5" fill="#2b5d7c" text-anchor="middle" textLength="9.88" lengthAdjust="spacingAndGlyphs">16</text>
<text x="410" y="450.82" font-size="7.0" fill="#12a0dc" textLength="25.98" lengthAdjust="spacingAndGlyphs">16 MHz</text>
<polyline points="444.5,435.5 455.5,435.5" fill="none" stroke="#828282" stroke-width="1"/>
<path d="M455.7,435.5 a2,2 0 0 1 4,0" fill="none" stroke="#828282"/>
<polyline points="459.5,435.5 476.5,435.5" fill="none" stroke="#828282" stroke-width="1"/>
<polygon points="482.4,435.5 475.2,432.9 475.2,438.1" fill="#4a4a4a"/>
<circle cx="450.5" cy="435.5" r="1.7" fill="#3c3c3c"/>
<text x="459.8" y="429.7" font-size="7.0" fill="#222" font-weight="700" textLength="11.19" lengthAdjust="spacingAndGlyphs">HSI</text>
<rect x="415.3" y="455.1" width="39.8" height="13" fill="#fff" stroke="#12a0dc" stroke-width="1.5" />
<text x="428.61" y="464.37" font-size="7.7" fill="#4a4a4a" text-anchor="middle" textLength="10.24" lengthAdjust="spacingAndGlyphs">/ 1</text>
<polyline points="444.4,460.1 448.4,463.8 452.4,460.1" fill="none" stroke="#555" stroke-width="0.9"/>
<text x="419" y="480.52" font-size="7.0" fill="#3a3a3a" textLength="30.85" lengthAdjust="spacingAndGlyphs">HSE PRES</text>
<polyline points="408.5,463.5 415.5,463.5" fill="none" stroke="#828282" stroke-width="1"/>
<polyline points="455.5,462.5 482.5,462.5" fill="none" stroke="#828282" stroke-width="1"/>
<polygon points="482.4,462.5 475.2,459.9 475.2,465.1" fill="#4a4a4a"/>
<text x="513.7" y="425.02" font-size="7.0" fill="#3a3a3a" textLength="17.09" lengthAdjust="spacingAndGlyphs">PLLM</text>
<polyline points="500.5,435.5 511.5,435.5" fill="none" stroke="#828282" stroke-width="1"/>
<polygon points="511,435.5 503.8,432.9 503.8,438.1" fill="#4a4a4a"/>
<rect x="511.7" y="429" width="39.1" height="13.1" fill="#fff" stroke="#12a0dc" stroke-width="1.5" />
<text x="524.77" y="438.32" font-size="7.7" fill="#4a4a4a" text-anchor="middle" textLength="10.24" lengthAdjust="spacingAndGlyphs">/ 2</text>
<polyline points="540.1,434.05 544.1,437.75 548.1,434.05" fill="none" stroke="#555" stroke-width="0.9"/>
<polyline points="551.5,435.5 564.5,435.5" fill="none" stroke="#828282" stroke-width="1"/>
<circle cx="556.5" cy="435.5" r="1.7" fill="#3c3c3c"/>
<rect x="562" y="423.6" width="46.7" height="74.1" fill="#dbdbdb" stroke="none" stroke-width="1" />
<rect x="608.7" y="423.6" width="45.3" height="61.2" fill="#e3e3e3" stroke="none" stroke-width="1" />
<rect x="561.4" y="521.6" width="47.3" height="73.7" fill="#dbdbdb" stroke="none" stroke-width="1" />
<rect x="608.7" y="521.6" width="44.9" height="62" fill="#e3e3e3" stroke="none" stroke-width="1" />
<rect x="564.7" y="429" width="39.4" height="13.1" fill="#fff" stroke="#12a0dc" stroke-width="1.5" />
<text x="577.87" y="438.32" font-size="7.7" fill="#4a4a4a" text-anchor="middle" textLength="11.16" lengthAdjust="spacingAndGlyphs">X 8</text>
<polyline points="593.4,434.05 597.4,437.75 601.4,434.05" fill="none" stroke="#555" stroke-width="0.9"/>
<text x="574.4" y="453.12" font-size="7.0" fill="#3a3a3a" textLength="8.54" lengthAdjust="spacingAndGlyphs">*N</text>
<polyline points="604.5,435.5 613.5,435.5" fill="none" stroke="#828282" stroke-width="1"/>
<polyline points="609.5,435.5 609.5,492.5 613.5,492.5" fill="none" stroke="#828282" stroke-width="1"/>
<polyline points="609.5,464.5 613.5,464.5" fill="none" stroke="#828282" stroke-width="1"/>
<rect x="614.1" y="429" width="39.5" height="13.1" fill="#fff" stroke="#12a0dc" stroke-width="1.5" />
<text x="627.31" y="438.32" font-size="7.7" fill="#4a4a4a" text-anchor="middle" textLength="10.24" lengthAdjust="spacingAndGlyphs">/ 2</text>
<polyline points="642.9,434.05 646.9,437.75 650.9,434.05" fill="none" stroke="#555" stroke-width="0.9"/>
<text x="631" y="453.12" font-size="7.0" fill="#3a3a3a" textLength="7.84" lengthAdjust="spacingAndGlyphs">/R</text>
<rect x="614.1" y="458.4" width="39.5" height="11.9" fill="#fff" stroke="#12a0dc" stroke-width="1.5" />
<text x="627.31" y="467.12" font-size="7.7" fill="#4a4a4a" text-anchor="middle" textLength="10.24" lengthAdjust="spacingAndGlyphs">/ 2</text>
<polyline points="642.9,462.85 646.9,466.55 650.9,462.85" fill="none" stroke="#555" stroke-width="0.9"/>
<text x="631" y="479.22" font-size="7.0" fill="#3a3a3a" textLength="8.95" lengthAdjust="spacingAndGlyphs">/Q</text>
<rect x="614.1" y="486.3" width="39.5" height="12.2" fill="#fff" stroke="#12a0dc" stroke-width="1.5" />
<text x="627.31" y="495.17" font-size="7.7" fill="#4a4a4a" text-anchor="middle" textLength="10.24" lengthAdjust="spacingAndGlyphs">/ 2</text>
<polyline points="642.9,490.9 646.9,494.6 650.9,490.9" fill="none" stroke="#555" stroke-width="0.9"/>
<text x="631" y="511.52" font-size="7.0" fill="#3a3a3a" textLength="7.41" lengthAdjust="spacingAndGlyphs">/P</text>
<text x="664.7" y="454.52" font-size="7.0" fill="#3a3a3a" textLength="16.53" lengthAdjust="spacingAndGlyphs">PLLQ</text>
<rect x="663.9" y="456.9" width="43.3" height="15.4" fill="#fff" stroke="#8e8e8e" stroke-width="1" />
<text x="685.55" y="467.37" font-size="7.7" fill="#3a3a3a" text-anchor="middle" textLength="8.95" lengthAdjust="spacingAndGlyphs">64</text>
<text x="664.7" y="483.72" font-size="7.0" fill="#3a3a3a" textLength="14.98" lengthAdjust="spacingAndGlyphs">PLLP</text>
<rect x="663.9" y="485.3" width="43.3" height="16" fill="#fff" stroke="#8e8e8e" stroke-width="1" />
<text x="685.55" y="496.07" font-size="7.7" fill="#3a3a3a" text-anchor="middle" textLength="8.95" lengthAdjust="spacingAndGlyphs">64</text>
<polyline points="654.5,464.5 663.5,464.5" fill="none" stroke="#828282" stroke-width="1"/>
<polyline points="654.5,492.5 663.5,492.5" fill="none" stroke="#828282" stroke-width="1"/>
<text x="566.6" y="496.52" font-size="7.0" fill="#3a3a3a" textLength="11.05" lengthAdjust="spacingAndGlyphs">PLL</text>
<polyline points="563.5,513.5 659.5,513.5 659.5,423.5" fill="none" stroke="#6c6c6c" stroke-width="1.6"/>
<polyline points="556.5,435.5 556.5,533.5 564.5,533.5" fill="none" stroke="#828282" stroke-width="1"/>
<rect x="564.5" y="527.3" width="39.8" height="13" fill="#fff" stroke="#a0a0a0" stroke-width="1" />
<text x="577.87" y="536.57" font-size="7.7" fill="#c2c2c2" text-anchor="middle" textLength="11.16" lengthAdjust="spacingAndGlyphs">X 8</text>
<polyline points="593.4,532.3 597.4,536 601.4,532.3" fill="none" stroke="#c2c2c2" stroke-width="0.9"/>
<text x="574.4" y="548.82" font-size="7.0" fill="#3a3a3a" textLength="8.54" lengthAdjust="spacingAndGlyphs">*N</text>
<polyline points="604.5,533.5 613.5,533.5" fill="none" stroke="#828282" stroke-width="1"/>
<polyline points="609.5,533.5 609.5,591.5 613.5,591.5" fill="none" stroke="#828282" stroke-width="1"/>
<polyline points="609.5,563.5 613.5,563.5" fill="none" stroke="#828282" stroke-width="1"/>
<rect x="613.9" y="527.3" width="39.9" height="13" fill="#fff" stroke="#a0a0a0" stroke-width="1" />
<text x="627.31" y="536.57" font-size="7.7" fill="#c2c2c2" text-anchor="middle" textLength="10.24" lengthAdjust="spacingAndGlyphs">/ 2</text>
<polyline points="642.9,532.3 646.9,536 650.9,532.3" fill="none" stroke="#c2c2c2" stroke-width="0.9"/>
<text x="631" y="548.82" font-size="7.0" fill="#3a3a3a" textLength="7.84" lengthAdjust="spacingAndGlyphs">/R</text>
<rect x="613.9" y="557" width="39.9" height="12.8" fill="#fff" stroke="#a0a0a0" stroke-width="1" />
<text x="627.31" y="566.17" font-size="7.7" fill="#c2c2c2" text-anchor="middle" textLength="10.24" lengthAdjust="spacingAndGlyphs">/ 2</text>
<polyline points="642.9,561.9 646.9,565.6 650.9,561.9" fill="none" stroke="#c2c2c2" stroke-width="0.9"/>
<text x="631" y="578.52" font-size="7.0" fill="#3a3a3a" textLength="8.95" lengthAdjust="spacingAndGlyphs">/Q</text>
<rect x="613.9" y="585.5" width="39.9" height="12.4" fill="#fff" stroke="#a0a0a0" stroke-width="1" />
<text x="627.31" y="594.47" font-size="7.7" fill="#c2c2c2" text-anchor="middle" textLength="10.24" lengthAdjust="spacingAndGlyphs">/ 2</text>
<polyline points="642.9,590.2 646.9,593.9 650.9,590.2" fill="none" stroke="#c2c2c2" stroke-width="0.9"/>
<text x="631" y="605.52" font-size="7.0" fill="#3a3a3a" textLength="7.41" lengthAdjust="spacingAndGlyphs">/P</text>
<text x="664.7" y="523.82" font-size="7.0" fill="#3a3a3a" textLength="30.48" lengthAdjust="spacingAndGlyphs">PLLSAI1R</text>
<rect x="663.9" y="526.5" width="43.3" height="16" fill="#fff" stroke="#a0a0a0" stroke-width="1" />
<text x="685.55" y="537.27" font-size="7.7" fill="#c6d8ea" text-anchor="middle" textLength="8.95" lengthAdjust="spacingAndGlyphs">64</text>
<text x="664.7" y="552.52" font-size="7.0" fill="#3a3a3a" textLength="31.6" lengthAdjust="spacingAndGlyphs">PLLSAI1Q</text>
<rect x="663.9" y="555.9" width="43.3" height="15.6" fill="#fff" stroke="#a0a0a0" stroke-width="1" />
<text x="685.55" y="566.47" font-size="7.7" fill="#c6d8ea" text-anchor="middle" textLength="8.95" lengthAdjust="spacingAndGlyphs">64</text>
<text x="664.7" y="583.22" font-size="7.0" fill="#3a3a3a" textLength="30.05" lengthAdjust="spacingAndGlyphs">PLLSAI1P</text>
<rect x="663.9" y="584.3" width="43.3" height="16.2" fill="#fff" stroke="#a0a0a0" stroke-width="1" />
<text x="685.55" y="595.17" font-size="7.7" fill="#c6d8ea" text-anchor="middle" textLength="8.95" lengthAdjust="spacingAndGlyphs">64</text>
<polyline points="654.5,533.5 663.5,533.5" fill="none" stroke="#828282" stroke-width="1"/>
<polyline points="654.5,563.5 663.5,563.5" fill="none" stroke="#828282" stroke-width="1"/>
<polyline points="654.5,591.5 663.5,591.5" fill="none" stroke="#828282" stroke-width="1"/>
<text x="566.6" y="593.12" font-size="7.0" fill="#3a3a3a" textLength="26.12" lengthAdjust="spacingAndGlyphs">PLLSAI1</text>
<polyline points="563.5,603.5 659.5,603.5 659.5,522.5" fill="none" stroke="#6c6c6c" stroke-width="1.6"/>
<rect x="484.3" y="597.5" width="40.2" height="17" fill="#0ca2e0" stroke="#1a8cc6" stroke-width="1" />
<text x="504.4" y="609.24" font-size="9" fill="#2b5d7c" text-anchor="middle" textLength="10.47" lengthAdjust="spacingAndGlyphs">48</text>
<text x="485.8" y="623.22" font-size="7.0" fill="#3a3a3a" textLength="37.4" lengthAdjust="spacingAndGlyphs">RC 48 MHz</text>
<polyline points="529.5,606.5 765.5,606.5" fill="none" stroke="#828282" stroke-width="1"/>
<polygon points="771.5,606.5 764.3,603.9 764.3,609.1" fill="#4a4a4a"/>
<text x="332.3" y="640.12" font-size="7.0" fill="#3a3a3a" textLength="53.87" lengthAdjust="spacingAndGlyphs">Input frequency</text>
<rect x="332.8" y="643.5" width="40.2" height="18.5" fill="#0ca2e0" stroke="#1a8cc6" stroke-width="1" />
<text x="352.9" y="655.63" font-size="8" fill="#2b5d7c" text-anchor="middle" textLength="9.3" lengthAdjust="spacingAndGlyphs">32</text>
<text x="334" y="675.72" font-size="7.0" fill="#12a0dc" textLength="32.52" lengthAdjust="spacingAndGlyphs">4-48 MHz</text>
<text x="332.3" y="696.52" font-size="7.0" fill="#909090" textLength="53.87" lengthAdjust="spacingAndGlyphs">Input frequency</text>
<rect x="332.3" y="699.5" width="41.2" height="18.9" fill="#dfe3e6" stroke="#b4bcc1" stroke-width="1" />
<text x="352.9" y="711.72" font-size="7.7" fill="#8a9196" text-anchor="middle" textLength="20.15" lengthAdjust="spacingAndGlyphs">2.097</text>
<text x="334" y="731.92" font-size="7.0" fill="#909090" textLength="14.92" lengthAdjust="spacingAndGlyphs">MHz</text>
<rect x="403.6" y="642.5" width="37" height="18.5" fill="#dfe3e6" stroke="#aab2b8" stroke-width="1" />
<text x="422.1" y="655.4" font-size="10" fill="#3c3c3c" text-anchor="middle" textLength="18.2" lengthAdjust="spacingAndGlyphs">HSE</text>
<rect x="396" y="645.5" width="5" height="5" fill="#fff" stroke="#555" stroke-width="0.9" />
<polyline points="401.5,648.5 403.5,648.5" fill="none" stroke="#666" stroke-width="1"/>
<rect x="396" y="656.5" width="5" height="5" fill="#fff" stroke="#555" stroke-width="0.9" />
<polyline points="401.5,659.5 403.5,659.5" fill="none" stroke="#666" stroke-width="1"/>
<polyline points="373.5,646.5 396.5,646.5" fill="none" stroke="#222" stroke-width="1"/>
<polygon points="394.4,646.5 389.8,643.5 389.8,649.5" fill="#111"/>
<polygon points="389.8,646.5 385.2,643.5 385.2,649.5" fill="#111"/>
<polyline points="375.5,658.5 396.5,658.5" fill="none" stroke="#222" stroke-width="1"/>
<polygon points="373.6,658.5 378.2,655.5 378.2,661.5" fill="#111"/>
<polygon points="378.2,658.5 382.8,655.5 382.8,661.5" fill="#111"/>
<polyline points="440.5,654.5 662.5,654.5 662.5,797.5 578.5,797.5" fill="none" stroke="#828282" stroke-width="1"/>
<polygon points="571,797.5 578.2,794.9 578.2,800.1" fill="#4a4a4a"/>
<rect x="396" y="710.5" width="5" height="5" fill="#fff" stroke="#555" stroke-width="0.9" />
<polyline points="401.5,713.5 660.5,713.5" fill="none" stroke="#828282" stroke-width="1"/>
<path d="M660.5,713.5 l2,-2.200 l2,2.200" fill="none" stroke="#828282"/>
<polyline points="664.5,713.5 765.5,713.5" fill="none" stroke="#828282" stroke-width="1"/>
<polygon points="771.5,713.5 764.3,710.9 764.3,716.1" fill="#4a4a4a"/>
<text x="533.8" y="729.52" font-size="7.0" fill="#8e8e8e" font-weight="700" textLength="59.28" lengthAdjust="spacingAndGlyphs">MCO Source Mux</text>
<polygon points="549.5,755 566.7,744 566.7,870 549.5,860" fill="#e8ebee" stroke="#8c9298" stroke-width="1"/>
<circle cx="560.4" cy="760" r="4" fill="#fff" stroke="#707070" stroke-width="0.8"/>
<circle cx="560.4" cy="778.1" r="4" fill="#fff" stroke="#707070" stroke-width="0.8"/>
<circle cx="560.4" cy="796" r="4" fill="#fff" stroke="#707070" stroke-width="0.8"/>
<circle cx="560.4" cy="814" r="4" fill="#fff" stroke="#707070" stroke-width="0.8"/>
<circle cx="560.4" cy="832.3" r="4" fill="#fff" stroke="#707070" stroke-width="0.8"/>
<polyline points="607.5,759.5 578.5,759.5" fill="none" stroke="#828282" stroke-width="1"/>
<polygon points="571,759.5 578.2,756.9 578.2,762.1" fill="#4a4a4a"/>
<text x="607" y="754.62" font-size="7.0" fill="#8a8a8a" text-anchor="end" textLength="11.17" lengthAdjust="spacingAndGlyphs">LSE</text>
<polyline points="607.5,778.5 578.5,778.5" fill="none" stroke="#828282" stroke-width="1"/>
<polygon points="571,778.5 578.2,775.9 578.2,781.1" fill="#4a4a4a"/>
<text x="607" y="773.12" font-size="7.0" fill="#8a8a8a" text-anchor="end" textLength="9.4" lengthAdjust="spacingAndGlyphs">LSI</text>
<text x="607" y="795.22" font-size="7.0" fill="#8a8a8a" text-anchor="end" textLength="12.74" lengthAdjust="spacingAndGlyphs">HSE</text>
<polyline points="607.5,816.5 578.5,816.5" fill="none" stroke="#828282" stroke-width="1"/>
<polygon points="571,816.5 578.2,813.9 578.2,819.1" fill="#4a4a4a"/>
<text x="607" y="814.02" font-size="7.0" fill="#8a8a8a" text-anchor="end" textLength="22.03" lengthAdjust="spacingAndGlyphs">HSI 16</text>
<polyline points="607.5,835.5 578.5,835.5" fill="none" stroke="#828282" stroke-width="1"/>
<polygon points="571,835.5 578.2,832.9 578.2,838.1" fill="#4a4a4a"/>
<text x="607" y="831.82" font-size="7.0" fill="#8a8a8a" text-anchor="end" textLength="23.9" lengthAdjust="spacingAndGlyphs">PLLCLK</text>
<text x="356.5" y="810.32" font-size="7.0" fill="#909090" textLength="38.01" lengthAdjust="spacingAndGlyphs">(MHz) MCO</text>
<rect x="396" y="823" width="5" height="5" fill="#fff" stroke="#555" stroke-width="0.9" />
<rect x="415.5" y="818.5" width="43.8" height="17" fill="#fff" stroke="#a0a0a0" stroke-width="1" />
<text x="437.4" y="829.77" font-size="7.7" fill="#c6d8ea" text-anchor="middle" textLength="8.95" lengthAdjust="spacingAndGlyphs">64</text>
<rect x="475.5" y="819" width="39.5" height="16" fill="#fff" stroke="#8e8e8e" stroke-width="1" />
<text x="488.77" y="829.77" font-size="7.7" fill="#3a3a3a" text-anchor="middle" textLength="10.24" lengthAdjust="spacingAndGlyphs">/ 1</text>
<polyline points="504.1,825.5 508.1,829.2 512.1,825.5" fill="none" stroke="#555" stroke-width="0.9"/>
<polyline points="549.5,825.5 522.5,825.5" fill="none" stroke="#828282" stroke-width="1"/>
<polygon points="515.8,825.5 523,822.9 523,828.1" fill="#4a4a4a"/>
<polyline points="475.5,825.5 466.5,825.5" fill="none" stroke="#828282" stroke-width="1"/>
<polygon points="460,825.5 467.2,822.9 467.2,828.1" fill="#4a4a4a"/>
<polyline points="415.5,825.5 401.5,825.5" fill="none" stroke="#828282" stroke-width="1"/>
<polygon points="402,825.5 407,822.9 407,828.1" fill="#4a4a4a"/>
<polygon points="406.6,825.5 411.6,822.9 411.6,828.1" fill="#4a4a4a"/>
<polyline points="797.5,424.5 797.5,166.5 1196.5,166.5" fill="none" stroke="#828282" stroke-width="1"/>
<polygon points="1202.6,166.5 1195.4,163.9 1195.4,169.1" fill="#4a4a4a"/>
<circle cx="797.5" cy="192.5" r="1.7" fill="#3c3c3c"/>
<circle cx="797.5" cy="375.5" r="1.7" fill="#3c3c3c"/>
<text x="817.8" y="176.92" font-size="7.0" fill="#3a3a3a" textLength="37.51" lengthAdjust="spacingAndGlyphs">CPU1 HPRE</text>
<polyline points="797.5,192.5 816.5,192.5" fill="none" stroke="#828282" stroke-width="1"/>
<polygon points="816.5,192.5 809.3,189.9 809.3,195.1" fill="#4a4a4a"/>
<rect x="816.9" y="182.4" width="39.4" height="12.9" fill="#fff" stroke="#12a0dc" stroke-width="1.5" />
<text x="830.07" y="191.62" font-size="7.7" fill="#4a4a4a" text-anchor="middle" textLength="10.24" lengthAdjust="spacingAndGlyphs">/ 1</text>
<polyline points="845.6,187.35 849.6,191.05 853.6,187.35" fill="none" stroke="#555" stroke-width="0.9"/>
<polyline points="856.5,192.5 887.5,192.5" fill="none" stroke="#828282" stroke-width="1"/>
<polygon points="887.5,192.5 880.3,189.9 880.3,195.1" fill="#4a4a4a"/>
<text x="888.6" y="176.92" font-size="7.0" fill="#3a3a3a" textLength="44.06" lengthAdjust="spacingAndGlyphs">HCLK1 (MHz)</text>
<rect x="888.1" y="181.5" width="43.1" height="16.4" fill="#fff" stroke="#12a0dc" stroke-width="1.5" />
<text x="909.65" y="192.47" font-size="7.7" fill="#4a4a4a" text-anchor="middle" textLength="8.95" lengthAdjust="spacingAndGlyphs">64</text>
<text x="888.6" y="210.72" font-size="7.0" fill="#12a0dc" textLength="42.66" lengthAdjust="spacingAndGlyphs">64 MHz max</text>
<polyline points="931.5,192.5 1196.5,192.5" fill="none" stroke="#828282" stroke-width="1"/>
<polygon points="1202.6,192.5 1195.4,189.9 1195.4,195.1" fill="#4a4a4a"/>
<circle cx="938.5" cy="192.5" r="1.7" fill="#3c3c3c"/>
<polyline points="938.5,192.5 938.5,320.5 941.5,320.5" fill="none" stroke="#828282" stroke-width="1"/>
<polygon points="947.2,320.5 940,317.9 940,323.1" fill="#4a4a4a"/>
<polyline points="938.5,216.5 1045.5,216.5" fill="none" stroke="#828282" stroke-width="1"/>
<rect x="1045.7" y="206.7" width="39.1" height="12.6" fill="#fff" stroke="#12a0dc" stroke-width="1.5" />
<text x="1058.77" y="215.77" font-size="7.7" fill="#4a4a4a" text-anchor="middle" textLength="10.24" lengthAdjust="spacingAndGlyphs">/ 1</text>
<polyline points="1074.1,211.5 1078.1,215.2 1082.1,211.5" fill="none" stroke="#555" stroke-width="0.9"/>
<polyline points="1085.5,216.5 1196.5,216.5" fill="none" stroke="#828282" stroke-width="1"/>
<polygon points="1202.6,216.5 1195.4,213.9 1195.4,219.1" fill="#4a4a4a"/>
<polyline points="938.5,241.5 1196.5,241.5" fill="none" stroke="#828282" stroke-width="1"/>
<polygon points="1202.6,241.5 1195.4,238.9 1195.4,244.1" fill="#4a4a4a"/>
<text x="944.8" y="251.92" font-size="7.0" fill="#3a3a3a" textLength="50.11" lengthAdjust="spacingAndGlyphs">APB1 Prescaler</text>
<circle cx="938.5" cy="267.5" r="1.7" fill="#3c3c3c"/>
<polygon points="947.2,267.5 940,264.9 940,270.1" fill="#4a4a4a"/>
<rect x="947.9" y="260.5" width="39.2" height="12.4" fill="#fff" stroke="#12a0dc" stroke-width="1.5" />
<text x="961" y="269.47" font-size="7.7" fill="#4a4a4a" text-anchor="middle" textLength="10.24" lengthAdjust="spacingAndGlyphs">/ 1</text>
<polyline points="976.4,265.2 980.4,268.9 984.4,265.2" fill="none" stroke="#555" stroke-width="0.9"/>
<polyline points="987.5,267.5 1196.5,267.5" fill="none" stroke="#828282" stroke-width="1"/>
<polygon points="1202.6,267.5 1195.4,264.9 1195.4,270.1" fill="#4a4a4a"/>
<text x="1061.3" y="263.3" font-size="7.0" fill="#1c2c4c" font-weight="700" textLength="21.62" lengthAdjust="spacingAndGlyphs">PCLK1</text>
<text x="1061.3" y="274.52" font-size="7.0" fill="#12a0dc" textLength="42.66" lengthAdjust="spacingAndGlyphs">64 MHz max</text>
<polyline points="1003.5,267.5 1003.5,293.5 1045.5,293.5" fill="none" stroke="#828282" stroke-width="1"/>
<rect x="1045.5" y="283.8" width="23.6" height="17.1" fill="#fff" stroke="#8e8e8e" stroke-width="1" />
<text x="1057.3" y="295.12" font-size="7.7" fill="#3a3a3a" text-anchor="middle" textLength="11.16" lengthAdjust="spacingAndGlyphs">X 1</text>
<polyline points="1069.5,293.5 1196.5,293.5" fill="none" stroke="#828282" stroke-width="1"/>
<polygon points="1202.6,293.5 1195.4,290.9 1195.4,296.1" fill="#4a4a4a"/>
<text x="944.8" y="304.32" font-size="7.0" fill="#3a3a3a" textLength="50.11" lengthAdjust="spacingAndGlyphs">APB2 Prescaler</text>
<rect x="947.9" y="312.3" width="39.2" height="12.7" fill="#fff" stroke="#12a0dc" stroke-width="1.5" />
<text x="961" y="321.42" font-size="7.7" fill="#4a4a4a" text-anchor="middle" textLength="10.24" lengthAdjust="spacingAndGlyphs">/ 1</text>
<polyline points="976.4,317.15 980.4,320.85 984.4,317.15" fill="none" stroke="#555" stroke-width="0.9"/>
<polyline points="987.5,319.5 1196.5,319.5" fill="none" stroke="#828282" stroke-width="1"/>
<polygon points="1202.6,319.5 1195.4,316.9 1195.4,322.1" fill="#4a4a4a"/>
<text x="1061.3" y="316.1" font-size="7.0" fill="#1c2c4c" font-weight="700" textLength="21.62" lengthAdjust="spacingAndGlyphs">PCLK2</text>
<text x="1061.3" y="326.92" font-size="7.0" fill="#12a0dc" textLength="42.66" lengthAdjust="spacingAndGlyphs">64 MHz max</text>
<polyline points="1003.5,319.5 1003.5,344.5 1045.5,344.5" fill="none" stroke="#828282" stroke-width="1"/>
<rect x="1045.5" y="334" width="23.6" height="16.9" fill="#fff" stroke="#8e8e8e" stroke-width="1" />
<text x="1057.3" y="345.22" font-size="7.7" fill="#3a3a3a" text-anchor="middle" textLength="11.16" lengthAdjust="spacingAndGlyphs">X 1</text>
<polyline points="1069.5,344.5 1196.5,344.5" fill="none" stroke="#828282" stroke-width="1"/>
<polygon points="1202.6,344.5 1195.4,341.9 1195.4,347.1" fill="#4a4a4a"/>
<text x="817.8" y="360.72" font-size="7.0" fill="#3a3a3a" textLength="37.51" lengthAdjust="spacingAndGlyphs">CPU2 HPRE</text>
<polygon points="816.5,375.5 809.3,372.9 809.3,378.1" fill="#4a4a4a"/>
<polyline points="797.5,375.5 812.5,375.5" fill="none" stroke="#828282" stroke-width="1"/>
<rect x="816.9" y="368.9" width="39.4" height="13" fill="#fff" stroke="#12a0dc" stroke-width="1.5" />
<text x="830.07" y="378.17" font-size="7.7" fill="#4a4a4a" text-anchor="middle" textLength="10.24" lengthAdjust="spacingAndGlyphs">/ 2</text>
<polyline points="845.6,373.9 849.6,377.6 853.6,373.9" fill="none" stroke="#555" stroke-width="0.9"/>
<polyline points="856.5,375.5 887.5,375.5" fill="none" stroke="#828282" stroke-width="1"/>
<polygon points="887.5,375.5 880.3,372.9 880.3,378.1" fill="#4a4a4a"/>
<text x="888.6" y="360.72" font-size="7.0" fill="#3a3a3a" textLength="44.06" lengthAdjust="spacingAndGlyphs">HCLK2 (MHz)</text>
<rect x="888.1" y="367.5" width="43.1" height="15.9" fill="#fff" stroke="#12a0dc" stroke-width="1.5" />
<text x="909.65" y="378.22" font-size="7.7" fill="#4a4a4a" text-anchor="middle" textLength="8.95" lengthAdjust="spacingAndGlyphs">32</text>
<text x="888.6" y="394.52" font-size="7.0" fill="#12a0dc" textLength="42.66" lengthAdjust="spacingAndGlyphs">32 MHz max</text>
<polyline points="931.5,375.5 1045.5,375.5" fill="none" stroke="#828282" stroke-width="1"/>
<circle cx="940.5" cy="375.5" r="1.7" fill="#3c3c3c"/>
<rect x="1045.7" y="369.3" width="39.1" height="12.4" fill="#fff" stroke="#12a0dc" stroke-width="1.5" />
<text x="1058.77" y="378.27" font-size="7.7" fill="#4a4a4a" text-anchor="middle" textLength="10.24" lengthAdjust="spacingAndGlyphs">/ 1</text>
<polyline points="1074.1,374 1078.1,377.7 1082.1,374" fill="none" stroke="#555" stroke-width="0.9"/>
<polyline points="1085.5,375.5 1196.5,375.5" fill="none" stroke="#828282" stroke-width="1"/>
<polygon points="1202.6,375.5 1195.4,372.9 1195.4,378.1" fill="#4a4a4a"/>
<polyline points="940.5,375.5 940.5,397.5 1196.5,397.5" fill="none" stroke="#828282" stroke-width="1"/>
<polygon points="1202.6,397.5 1195.4,394.9 1195.4,400.1" fill="#4a4a4a"/>
<text x="817.8" y="413.12" font-size="7.0" fill="#3a3a3a" textLength="41.84" lengthAdjust="spacingAndGlyphs">HCLK4 HPRE</text>
<polyline points="797.5,424.5 816.5,424.5" fill="none" stroke="#828282" stroke-width="1"/>
<rect x="816.9" y="418.1" width="39.4" height="12.9" fill="#fff" stroke="#12a0dc" stroke-width="1.5" />
<text x="830.07" y="427.32" font-size="7.7" fill="#4a4a4a" text-anchor="middle" textLength="10.24" lengthAdjust="spacingAndGlyphs">/ 1</text>
<polyline points="845.6,423.05 849.6,426.75 853.6,423.05" fill="none" stroke="#555" stroke-width="0.9"/>
<polyline points="856.5,424.5 1196.5,424.5" fill="none" stroke="#828282" stroke-width="1"/>
<polygon points="1202.6,424.5 1195.4,421.9 1195.4,427.1" fill="#4a4a4a"/>
<rect x="1203.3" y="159.2" width="43" height="15.8" fill="#fff" stroke="#12a0dc" stroke-width="1.5" />
<text x="1224.8" y="169.87" font-size="7.7" fill="#4a4a4a" text-anchor="middle" textLength="8.95" lengthAdjust="spacingAndGlyphs">64</text>
<text x="1249" y="169.52" font-size="7.0" fill="#4a4a4a" font-weight="700" textLength="54.34" lengthAdjust="spacingAndGlyphs">To Power (MHz)</text>
<rect x="1203.3" y="182.1" width="43" height="15.7" fill="#fff" stroke="#12a0dc" stroke-width="1.5" />
<text x="1224.8" y="192.72" font-size="7.7" fill="#4a4a4a" text-anchor="middle" textLength="8.95" lengthAdjust="spacingAndGlyphs">64</text>
<rect x="1203.3" y="206.6" width="43" height="15.7" fill="#fff" stroke="#12a0dc" stroke-width="1.5" />
<text x="1224.8" y="217.22" font-size="7.7" fill="#4a4a4a" text-anchor="middle" textLength="8.95" lengthAdjust="spacingAndGlyphs">64</text>
<text x="1249" y="219.82" font-size="7.0" fill="#4a4a4a" font-weight="700" textLength="99.32" lengthAdjust="spacingAndGlyphs">To CPU1 System timer (MHz)</text>
<rect x="1203.3" y="231.9" width="43" height="15.9" fill="#fff" stroke="#12a0dc" stroke-width="1.5" />
<text x="1224.8" y="242.62" font-size="7.7" fill="#4a4a4a" text-anchor="middle" textLength="8.95" lengthAdjust="spacingAndGlyphs">64</text>
<text x="1249" y="244.52" font-size="7.0" fill="#4a4a4a" font-weight="700" textLength="70.76" lengthAdjust="spacingAndGlyphs">To CPU1 FCLK (MHz)</text>
<rect x="1203.3" y="258.9" width="43" height="15.9" fill="#fff" stroke="#12a0dc" stroke-width="1.5" />
<text x="1224.8" y="269.62" font-size="7.7" fill="#4a4a4a" text-anchor="middle" textLength="8.95" lengthAdjust="spacingAndGlyphs">64</text>
<text x="1249" y="270.12" font-size="7.0" fill="#4a4a4a" font-weight="700" textLength="101.22" lengthAdjust="spacingAndGlyphs">APB1 peripheral clocks (MHz)</text>
<rect x="1203.3" y="284.3" width="43" height="15.9" fill="#fff" stroke="#12a0dc" stroke-width="1.5" />
<text x="1224.8" y="295.02" font-size="7.7" fill="#4a4a4a" text-anchor="middle" textLength="8.95" lengthAdjust="spacingAndGlyphs">64</text>
<text x="1249" y="294.82" font-size="7.0" fill="#4a4a4a" font-weight="700" textLength="85.85" lengthAdjust="spacingAndGlyphs">APB1 Timer clocks (MHz)</text>
<rect x="1203.3" y="310.9" width="43" height="15.8" fill="#fff" stroke="#12a0dc" stroke-width="1.5" />
<text x="1224.8" y="321.57" font-size="7.7" fill="#4a4a4a" text-anchor="middle" textLength="8.95" lengthAdjust="spacingAndGlyphs">64</text>
<text x="1249" y="321.72" font-size="7.0" fill="#4a4a4a" font-weight="700" textLength="101.22" lengthAdjust="spacingAndGlyphs">APB2 peripheral clocks (MHz)</text>
<rect x="1203.3" y="334.9" width="43" height="15.8" fill="#fff" stroke="#12a0dc" stroke-width="1.5" />
<text x="1224.8" y="345.57" font-size="7.7" fill="#4a4a4a" text-anchor="middle" textLength="8.95" lengthAdjust="spacingAndGlyphs">64</text>
<text x="1249" y="348.22" font-size="7.0" fill="#4a4a4a" font-weight="700" textLength="84.09" lengthAdjust="spacingAndGlyphs">APB2 timer clocks (MHz)</text>
<rect x="1203.3" y="367.8" width="43" height="15.7" fill="#fff" stroke="#12a0dc" stroke-width="1.5" />
<text x="1224.8" y="378.42" font-size="7.7" fill="#4a4a4a" text-anchor="middle" textLength="8.95" lengthAdjust="spacingAndGlyphs">32</text>
<text x="1249" y="378.12" font-size="7.0" fill="#4a4a4a" font-weight="700" textLength="99.32" lengthAdjust="spacingAndGlyphs">To CPU2 System timer (MHz)</text>
<rect x="1203.3" y="393.1" width="43" height="15.8" fill="#fff" stroke="#12a0dc" stroke-width="1.5" />
<text x="1224.8" y="403.77" font-size="7.7" fill="#4a4a4a" text-anchor="middle" textLength="8.95" lengthAdjust="spacingAndGlyphs">32</text>
<text x="1249" y="404.22" font-size="7.0" fill="#4a4a4a" font-weight="700" textLength="70.76" lengthAdjust="spacingAndGlyphs">To CPU2 FCLK (MHz)</text>
<rect x="1203.3" y="416.5" width="43" height="15.8" fill="#fff" stroke="#12a0dc" stroke-width="1.5" />
<text x="1224.8" y="427.17" font-size="7.7" fill="#4a4a4a" text-anchor="middle" textLength="8.95" lengthAdjust="spacingAndGlyphs">64</text>
<text x="1249" y="427.72" font-size="7.0" fill="#4a4a4a" font-weight="700" textLength="104.47" lengthAdjust="spacingAndGlyphs">To HCLK4, Flash, SRAM2(MHz)</text>
<text x="1249" y="190.12" font-size="7.0" fill="#4a4a4a" font-weight="700" textLength="80.89" lengthAdjust="spacingAndGlyphs">HCLK to AHB bus, core,</text>
<text x="1249" y="197.92" font-size="7.0" fill="#4a4a4a" font-weight="700" textLength="84.52" lengthAdjust="spacingAndGlyphs">memory and DMA (MHz)</text>
<text x="1031.3" y="435.72" font-size="7.0" fill="#3a3a3a" font-weight="700" textLength="61.23" lengthAdjust="spacingAndGlyphs">HCLK5 Clock Mux</text>
<text x="993.4" y="449.52" font-size="7.0" fill="#8a8a8a" textLength="12.74" lengthAdjust="spacingAndGlyphs">HSE</text>
<polyline points="990.5,456.5 1018.5,456.5" fill="none" stroke="#828282" stroke-width="1"/>
<rect x="1018.7" y="447.9" width="24.5" height="16" fill="#fff" stroke="#8e8e8e" stroke-width="1" />
<text x="1030.95" y="458.67" font-size="7.7" fill="#3a3a3a" text-anchor="middle" textLength="10.24" lengthAdjust="spacingAndGlyphs">/ 2</text>
<polyline points="1043.5,456.5 1064.5,456.5" fill="none" stroke="#828282" stroke-width="1"/>
<polygon points="1064,456.5 1056.8,453.9 1056.8,459.1" fill="#4a4a4a"/>
<polygon points="1067.7,441.2 1085.1,452.1 1085.1,490.4 1067.7,501" fill="#e8ebee" stroke="#8c9298" stroke-width="1"/>
<circle cx="1075.5" cy="459.4" r="4" fill="#fff" stroke="#7c7c7c" stroke-width="0.8"/>
<circle cx="1075.5" cy="459.4" r="1.9" fill="#7c7c7c"/>
<circle cx="1075.5" cy="484.2" r="4" fill="#fff" stroke="#707070" stroke-width="0.8"/>
<text x="1040.3" y="481" font-size="7.0" fill="#1c2c4c" font-weight="700" textLength="11.19" lengthAdjust="spacingAndGlyphs">HSI</text>
<polyline points="1043.5,486.5 1064.5,486.5" fill="none" stroke="#828282" stroke-width="1"/>
<polygon points="1064,486.5 1056.8,483.9 1056.8,489.1" fill="#4a4a4a"/>
<polyline points="1085.5,471.5 1194.5,471.5" fill="none" stroke="#828282" stroke-width="1"/>
<polygon points="1201,471.5 1193.8,468.9 1193.8,474.1" fill="#4a4a4a"/>
<circle cx="1114.5" cy="471.5" r="1.7" fill="#3c3c3c"/>
<polyline points="1114.5,471.5 1114.5,449.5 1194.5,449.5" fill="none" stroke="#828282" stroke-width="1"/>
<polygon points="1201,449.5 1193.8,446.9 1193.8,452.1" fill="#4a4a4a"/>
<rect x="1201.5" y="441.8" width="43.7" height="16" fill="#fff" stroke="#8e8e8e" stroke-width="1" />
<text x="1223.35" y="452.68" font-size="8" fill="#3a3a3a" text-anchor="middle" textLength="9.3" lengthAdjust="spacingAndGlyphs">16</text>
<text x="1245.7" y="451.02" font-size="7.0" fill="#4a4a4a" font-weight="700" textLength="101.22" lengthAdjust="spacingAndGlyphs">APB3 peripheral clocks (MHz)</text>
<rect x="1201.5" y="464" width="43.7" height="16.8" fill="#fff" stroke="#8e8e8e" stroke-width="1" />
<text x="1223.35" y="475.28" font-size="8" fill="#3a3a3a" text-anchor="middle" textLength="9.3" lengthAdjust="spacingAndGlyphs">16</text>
<text x="1245.7" y="477.02" font-size="7.0" fill="#4a4a4a" font-weight="700" textLength="51.99" lengthAdjust="spacingAndGlyphs">To AHB5 (MHz)</text>
<text x="843.7" y="446.82" font-size="7.0" fill="#8e8e8e" font-weight="700" textLength="53.34" lengthAdjust="spacingAndGlyphs">RNG Clock Mux</text>
<polyline points="790.5,579.5 807.5,579.5 807.5,466.5 816.5,466.5" fill="none" stroke="#828282" stroke-width="1"/>
<rect x="816.9" y="458.5" width="24.2" height="16.6" fill="#fff" stroke="#8e8e8e" stroke-width="1" />
<text x="829" y="469.57" font-size="7.7" fill="#3a3a3a" text-anchor="middle" textLength="10.24" lengthAdjust="spacingAndGlyphs">/ 3</text>
<text x="843.7" y="461.92" font-size="7.0" fill="#8a8a8a" textLength="21.69" lengthAdjust="spacingAndGlyphs">CLK48</text>
<polyline points="841.5,466.5 876.5,466.5" fill="none" stroke="#828282" stroke-width="1"/>
<polygon points="876.3,466.5 869.1,463.9 869.1,469.1" fill="#4a4a4a"/>
<polygon points="877,450.8 894.5,461.8 894.5,521.7 877,532.3" fill="#e8ebee" stroke="#8c9298" stroke-width="1"/>
<circle cx="884.8" cy="463.3" r="4" fill="#fff" stroke="#707070" stroke-width="0.8"/>
<circle cx="884.8" cy="490.4" r="4" fill="#fff" stroke="#7c7c7c" stroke-width="0.8"/>
<circle cx="884.8" cy="490.4" r="1.9" fill="#7c7c7c"/>
<circle cx="884.8" cy="517.2" r="4" fill="#fff" stroke="#707070" stroke-width="0.8"/>
<text x="843.7" y="488.02" font-size="7.0" fill="#8a8a8a" textLength="9.4" lengthAdjust="spacingAndGlyphs">LSI</text>
<polyline points="850.5,492.5 876.5,492.5" fill="none" stroke="#828282" stroke-width="1"/>
<polygon points="876.3,492.5 869.1,489.9 869.1,495.1" fill="#4a4a4a"/>
<text x="843.7" y="514.52" font-size="7.0" fill="#8a8a8a" textLength="11.17" lengthAdjust="spacingAndGlyphs">LSE</text>
<polyline points="850.5,518.5 876.5,518.5" fill="none" stroke="#828282" stroke-width="1"/>
<polygon points="876.3,518.5 869.1,515.9 869.1,521.1" fill="#4a4a4a"/>
<polyline points="894.5,492.5 921.5,492.5" fill="none" stroke="#828282" stroke-width="1"/>
<polygon points="921.3,492.5 914.1,489.9 914.1,495.1" fill="#4a4a4a"/>
<rect x="921.8" y="484.7" width="43.3" height="16.4" fill="#fff" stroke="#a0a0a0" stroke-width="1" />
<text x="943.45" y="495.67" font-size="7.7" fill="#c6d8ea" text-anchor="middle" textLength="20.15" lengthAdjust="spacingAndGlyphs">0.032</text>
<text x="968" y="495.82" font-size="7.0" fill="#8e8e8e" font-weight="700" textLength="48.19" lengthAdjust="spacingAndGlyphs">To RNG (MHz)</text>
<text x="742.7" y="529.32" font-size="7.0" fill="#8e8e8e" font-weight="700" textLength="60.5" lengthAdjust="spacingAndGlyphs">CLK48 Clock Mux</text>
<polygon points="772.9,537.9 790.3,549.7 790.3,608.4 772.9,619.6" fill="#e8ebee" stroke="#8c9298" stroke-width="1"/>
<circle cx="778.5" cy="549.4" r="4" fill="#fff" stroke="#7c7c7c" stroke-width="0.8"/>
<circle cx="778.5" cy="549.4" r="1.9" fill="#7c7c7c"/>
<circle cx="778.5" cy="567.5" r="4" fill="#fff" stroke="#707070" stroke-width="0.8"/>
<circle cx="778.5" cy="585.6" r="4" fill="#fff" stroke="#707070" stroke-width="0.8"/>
<circle cx="778.5" cy="603.4" r="4" fill="#fff" stroke="#707070" stroke-width="0.8"/>
<text x="737.4" y="544.22" font-size="7.0" fill="#8a8a8a" textLength="31.6" lengthAdjust="spacingAndGlyphs">PLLSAI1Q</text>
<text x="737.4" y="562.92" font-size="7.0" fill="#8a8a8a" textLength="16.53" lengthAdjust="spacingAndGlyphs">PLLQ</text>
<text x="737.4" y="581.82" font-size="7.0" fill="#8a8a8a" textLength="11.87" lengthAdjust="spacingAndGlyphs">MSI</text>
<text x="737.4" y="600.42" font-size="7.0" fill="#8a8a8a" textLength="19.82" lengthAdjust="spacingAndGlyphs">HSI48</text>
<polyline points="740.5,551.5 771.5,551.5" fill="none" stroke="#828282" stroke-width="1"/>
<polygon points="771.9,551.5 764.7,548.9 764.7,554.1" fill="#4a4a4a"/>
<polyline points="740.5,569.5 771.5,569.5" fill="none" stroke="#828282" stroke-width="1"/>
<polygon points="771.9,569.5 764.7,566.9 764.7,572.1" fill="#4a4a4a"/>
<polyline points="740.5,587.5 771.5,587.5" fill="none" stroke="#828282" stroke-width="1"/>
<polygon points="771.9,587.5 764.7,584.9 764.7,590.1" fill="#4a4a4a"/>
<polyline points="790.5,579.5 877.5,579.5" fill="none" stroke="#828282" stroke-width="1"/>
<polygon points="883.3,579.5 876.1,576.9 876.1,582.1" fill="#4a4a4a"/>
<rect x="883.8" y="571.1" width="44" height="16.7" fill="#fff" stroke="#a0a0a0" stroke-width="1" />
<text x="905.8" y="582.22" font-size="7.7" fill="#c6d8ea" text-anchor="middle" textLength="8.95" lengthAdjust="spacingAndGlyphs">64</text>
<text x="929" y="580.52" font-size="7.0" fill="#8e8e8e" font-weight="700" textLength="46.2" lengthAdjust="spacingAndGlyphs">To USB (MHz)</text>
<text x="742.7" y="634.32" font-size="7.0" fill="#8e8e8e" font-weight="700" textLength="53.75" lengthAdjust="spacingAndGlyphs">SAI1 Clock Mux</text>
<polygon points="772.9,644.2 790.3,655.2 790.3,714.4 772.9,725.4" fill="#e8ebee" stroke="#8c9298" stroke-width="1"/>
<circle cx="778.5" cy="658.2" r="4" fill="#fff" stroke="#7c7c7c" stroke-width="0.8"/>
<circle cx="778.5" cy="658.2" r="1.9" fill="#7c7c7c"/>
<circle cx="778.5" cy="676.3" r="4" fill="#fff" stroke="#707070" stroke-width="0.8"/>
<circle cx="778.5" cy="694.4" r="4" fill="#fff" stroke="#707070" stroke-width="0.8"/>
<circle cx="778.5" cy="712.2" r="4" fill="#fff" stroke="#707070" stroke-width="0.8"/>
<text x="737.4" y="649.22" font-size="7.0" fill="#8a8a8a" textLength="30.05" lengthAdjust="spacingAndGlyphs">PLLSAI1P</text>
<text x="737.4" y="667.82" font-size="7.0" fill="#8a8a8a" textLength="14.98" lengthAdjust="spacingAndGlyphs">PLLP</text>
<text x="737.4" y="686.92" font-size="7.0" fill="#8a8a8a" textLength="10.97" lengthAdjust="spacingAndGlyphs">HSI</text>
<text x="737.4" y="705.62" font-size="7.0" fill="#8a8a8a" textLength="31.11" lengthAdjust="spacingAndGlyphs">SAI1_EXT</text>
<polyline points="740.5,657.5 771.5,657.5" fill="none" stroke="#828282" stroke-width="1"/>
<polygon points="771.9,657.5 764.7,654.9 764.7,660.1" fill="#4a4a4a"/>
<polyline points="740.5,676.5 771.5,676.5" fill="none" stroke="#828282" stroke-width="1"/>
<polygon points="771.9,676.5 764.7,673.9 764.7,679.1" fill="#4a4a4a"/>
<polyline points="740.5,693.5 771.5,693.5" fill="none" stroke="#828282" stroke-width="1"/>
<polygon points="771.9,693.5 764.7,690.9 764.7,696.1" fill="#4a4a4a"/>
<polyline points="790.5,685.5 877.5,685.5" fill="none" stroke="#828282" stroke-width="1"/>
<polygon points="883.3,685.5 876.1,682.9 876.1,688.1" fill="#4a4a4a"/>
<rect x="883.8" y="676" width="44" height="16.9" fill="#fff" stroke="#a0a0a0" stroke-width="1" />
<text x="905.8" y="687.22" font-size="7.7" fill="#c6d8ea" text-anchor="middle" textLength="8.95" lengthAdjust="spacingAndGlyphs">64</text>
<text x="929" y="685.02" font-size="7.0" fill="#8e8e8e" font-weight="700" textLength="48.59" lengthAdjust="spacingAndGlyphs">To SAI1 (MHz)</text>
<text x="1031.7" y="529.32" font-size="7.0" fill="#8e8e8e" font-weight="700" textLength="63.2" lengthAdjust="spacingAndGlyphs">LPTIM1 Clock Mux</text>
<polygon points="1068.6,538.4 1086.4,550.2 1086.4,608.9 1068.6,619.9" fill="#e8ebee" stroke="#8c9298" stroke-width="1"/>
<circle cx="1075.3" cy="551.1" r="4" fill="#fff" stroke="#7c7c7c" stroke-width="0.8"/>
<circle cx="1075.3" cy="551.1" r="1.9" fill="#7c7c7c"/>
<circle cx="1075.3" cy="569.2" r="4" fill="#fff" stroke="#707070" stroke-width="0.8"/>
<circle cx="1075.3" cy="586.9" r="4" fill="#fff" stroke="#707070" stroke-width="0.8"/>
<circle cx="1075.3" cy="604.7" r="4" fill="#fff" stroke="#707070" stroke-width="0.8"/>
<text x="1040.3" y="544.22" font-size="7.0" fill="#8a8a8a" textLength="21.2" lengthAdjust="spacingAndGlyphs">PCLK1</text>
<text x="1040.3" y="563.22" font-size="7.0" fill="#8a8a8a" textLength="9.4" lengthAdjust="spacingAndGlyphs">LSI</text>
<text x="1040.3" y="581.82" font-size="7.0" fill="#8a8a8a" textLength="10.97" lengthAdjust="spacingAndGlyphs">HSI</text>
<text x="1040.3" y="600.82" font-size="7.0" fill="#8a8a8a" textLength="11.17" lengthAdjust="spacingAndGlyphs">LSE</text>
<polyline points="1037.5,551.5 1067.5,551.5" fill="none" stroke="#828282" stroke-width="1"/>
<polygon points="1067.6,551.5 1060.4,548.9 1060.4,554.1" fill="#4a4a4a"/>
<polyline points="1037.5,570.5 1067.5,570.5" fill="none" stroke="#828282" stroke-width="1"/>
<polygon points="1067.6,570.5 1060.4,567.9 1060.4,573.1" fill="#4a4a4a"/>
<polyline points="1037.5,588.5 1067.5,588.5" fill="none" stroke="#828282" stroke-width="1"/>
<polygon points="1067.6,588.5 1060.4,585.9 1060.4,591.1" fill="#4a4a4a"/>
<polyline points="1037.5,607.5 1067.5,607.5" fill="none" stroke="#828282" stroke-width="1"/>
<polygon points="1067.6,607.5 1060.4,604.9 1060.4,610.1" fill="#4a4a4a"/>
<polyline points="1086.5,579.5 1194.5,579.5" fill="none" stroke="#828282" stroke-width="1"/>
<polygon points="1201.2,579.5 1194,576.9 1194,582.1" fill="#4a4a4a"/>
<rect x="1201.7" y="571" width="43.4" height="17.1" fill="#fff" stroke="#a0a0a0" stroke-width="1" />
<text x="1223.4" y="582.32" font-size="7.7" fill="#c6d8ea" text-anchor="middle" textLength="8.95" lengthAdjust="spacingAndGlyphs">64</text>
<text x="1246" y="580.52" font-size="7.0" fill="#8e8e8e" font-weight="700" textLength="58.04" lengthAdjust="spacingAndGlyphs">To LPTIM1 (MHz)</text>
<text x="1031.7" y="634.32" font-size="7.0" fill="#8e8e8e" font-weight="700" textLength="69.29" lengthAdjust="spacingAndGlyphs">LPUART1 Clock Mux</text>
<polygon points="1069.1,644.4 1086.5,656.2 1086.5,714.1 1069.1,726.5" fill="#e8ebee" stroke="#8c9298" stroke-width="1"/>
<circle cx="1075.5" cy="658.3" r="4" fill="#fff" stroke="#7c7c7c" stroke-width="0.8"/>
<circle cx="1075.5" cy="658.3" r="1.9" fill="#7c7c7c"/>
<circle cx="1075.5" cy="676.2" r="4" fill="#fff" stroke="#707070" stroke-width="0.8"/>
<circle cx="1075.5" cy="694.3" r="4" fill="#fff" stroke="#707070" stroke-width="0.8"/>
<circle cx="1075.5" cy="712.1" r="4" fill="#fff" stroke="#707070" stroke-width="0.8"/>
<text x="1040.3" y="649.42" font-size="7.0" fill="#8a8a8a" textLength="21.2" lengthAdjust="spacingAndGlyphs">PCLK1</text>
<text x="1040.3" y="668.02" font-size="7.0" fill="#8a8a8a" textLength="24.72" lengthAdjust="spacingAndGlyphs">SYSCLK</text>
<text x="1040.3" y="687.02" font-size="7.0" fill="#8a8a8a" textLength="10.97" lengthAdjust="spacingAndGlyphs">HSI</text>
<text x="1040.3" y="705.82" font-size="7.0" fill="#8a8a8a" textLength="11.17" lengthAdjust="spacingAndGlyphs">LSE</text>
<polyline points="1037.5,657.5 1068.5,657.5" fill="none" stroke="#828282" stroke-width="1"/>
<polygon points="1068.1,657.5 1060.9,654.9 1060.9,660.1" fill="#4a4a4a"/>
<polyline points="1037.5,676.5 1068.5,676.5" fill="none" stroke="#828282" stroke-width="1"/>
<polygon points="1068.1,676.5 1060.9,673.9 1060.9,679.1" fill="#4a4a4a"/>
<polyline points="1037.5,694.5 1068.5,694.5" fill="none" stroke="#828282" stroke-width="1"/>
<polygon points="1068.1,694.5 1060.9,691.9 1060.9,697.1" fill="#4a4a4a"/>
<polyline points="1037.5,713.5 1068.5,713.5" fill="none" stroke="#828282" stroke-width="1"/>
<polygon points="1068.1,713.5 1060.9,710.9 1060.9,716.1" fill="#4a4a4a"/>
<polyline points="1086.5,685.5 1194.5,685.5" fill="none" stroke="#828282" stroke-width="1"/>
<polygon points="1201.2,685.5 1194,682.9 1194,688.1" fill="#4a4a4a"/>
<rect x="1201.7" y="676.2" width="43.4" height="16.8" fill="#fff" stroke="#a0a0a0" stroke-width="1" />
<text x="1223.4" y="687.37" font-size="7.7" fill="#c6d8ea" text-anchor="middle" textLength="8.95" lengthAdjust="spacingAndGlyphs">64</text>
<text x="1246" y="685.52" font-size="7.0" fill="#8e8e8e" font-weight="700" textLength="64.14" lengthAdjust="spacingAndGlyphs">To LPUART1 (MHz)</text>
<text x="1121.6" y="484.52" font-size="7.0" fill="#8e8e8e" font-weight="700" textLength="65.53" lengthAdjust="spacingAndGlyphs">USART1 Clock Mux</text>
<polygon points="1157.4,492.4 1174.4,503.3 1174.4,562.9 1157.4,573.9" fill="#e8ebee" stroke="#8c9298" stroke-width="1"/>
<circle cx="1163.9" cy="505.4" r="4" fill="#fff" stroke="#7c7c7c" stroke-width="0.8"/>
<circle cx="1163.9" cy="505.4" r="1.9" fill="#7c7c7c"/>
<circle cx="1163.9" cy="523.1" r="4" fill="#fff" stroke="#707070" stroke-width="0.8"/>
<circle cx="1163.9" cy="541.2" r="4" fill="#fff" stroke="#707070" stroke-width="0.8"/>
<circle cx="1163.9" cy="559.3" r="4" fill="#fff" stroke="#707070" stroke-width="0.8"/>
<text x="1129" y="499.32" font-size="7.0" fill="#8a8a8a" textLength="21.2" lengthAdjust="spacingAndGlyphs">PCLK2</text>
<text x="1129" y="518.32" font-size="7.0" fill="#8a8a8a" textLength="24.72" lengthAdjust="spacingAndGlyphs">SYSCLK</text>
<text x="1129" y="537.02" font-size="7.0" fill="#8a8a8a" textLength="10.97" lengthAdjust="spacingAndGlyphs">HSI</text>
<text x="1129" y="555.92" font-size="7.0" fill="#8a8a8a" textLength="11.17" lengthAdjust="spacingAndGlyphs">LSE</text>
<polyline points="1125.5,505.5 1156.5,505.5" fill="none" stroke="#828282" stroke-width="1"/>
<polygon points="1156.4,505.5 1149.2,502.9 1149.2,508.1" fill="#4a4a4a"/>
<polyline points="1125.5,523.5 1156.5,523.5" fill="none" stroke="#828282" stroke-width="1"/>
<polygon points="1156.4,523.5 1149.2,520.9 1149.2,526.1" fill="#4a4a4a"/>
<polyline points="1125.5,541.5 1156.5,541.5" fill="none" stroke="#828282" stroke-width="1"/>
<polygon points="1156.4,541.5 1149.2,538.9 1149.2,544.1" fill="#4a4a4a"/>
<polyline points="1125.5,560.5 1156.5,560.5" fill="none" stroke="#828282" stroke-width="1"/>
<polygon points="1156.4,560.5 1149.2,557.9 1149.2,563.1" fill="#4a4a4a"/>
<polyline points="1174.5,533.5 1201.5,533.5" fill="none" stroke="#828282" stroke-width="1"/>
<polygon points="1201.2,533.5 1194,530.9 1194,536.1" fill="#4a4a4a"/>
<rect x="1201.7" y="523.6" width="43.4" height="17.1" fill="#fff" stroke="#a0a0a0" stroke-width="1" />
<text x="1223.4" y="534.92" font-size="7.7" fill="#c6d8ea" text-anchor="middle" textLength="8.95" lengthAdjust="spacingAndGlyphs">64</text>
<text x="1246" y="535.32" font-size="7.0" fill="#8e8e8e" font-weight="700" textLength="60.38" lengthAdjust="spacingAndGlyphs">To USART1 (MHz)</text>
<text x="1121.6" y="589.42" font-size="7.0" fill="#8e8e8e" font-weight="700" textLength="63.2" lengthAdjust="spacingAndGlyphs">LPTIM2 Clock Mux</text>
<polygon points="1157.4,598.4 1174.4,609.8 1174.4,669.3 1157.4,680.3" fill="#e8ebee" stroke="#8c9298" stroke-width="1"/>
<circle cx="1163.9" cy="611.8" r="4" fill="#fff" stroke="#7c7c7c" stroke-width="0.8"/>
<circle cx="1163.9" cy="611.8" r="1.9" fill="#7c7c7c"/>
<circle cx="1163.9" cy="629.8" r="4" fill="#fff" stroke="#707070" stroke-width="0.8"/>
<circle cx="1163.9" cy="647.8" r="4" fill="#fff" stroke="#707070" stroke-width="0.8"/>
<circle cx="1163.9" cy="665.9" r="4" fill="#fff" stroke="#707070" stroke-width="0.8"/>
<text x="1129" y="604.32" font-size="7.0" fill="#8a8a8a" textLength="21.2" lengthAdjust="spacingAndGlyphs">PCLK1</text>
<text x="1129" y="623.32" font-size="7.0" fill="#8a8a8a" textLength="9.4" lengthAdjust="spacingAndGlyphs">LSI</text>
<text x="1129" y="641.82" font-size="7.0" fill="#8a8a8a" textLength="10.97" lengthAdjust="spacingAndGlyphs">HSI</text>
<text x="1129" y="660.82" font-size="7.0" fill="#8a8a8a" textLength="11.17" lengthAdjust="spacingAndGlyphs">LSE</text>
<polyline points="1125.5,611.5 1156.5,611.5" fill="none" stroke="#828282" stroke-width="1"/>
<polygon points="1156.4,611.5 1149.2,608.9 1149.2,614.1" fill="#4a4a4a"/>
<polyline points="1125.5,629.5 1156.5,629.5" fill="none" stroke="#828282" stroke-width="1"/>
<polygon points="1156.4,629.5 1149.2,626.9 1149.2,632.1" fill="#4a4a4a"/>
<polyline points="1125.5,647.5 1156.5,647.5" fill="none" stroke="#828282" stroke-width="1"/>
<polygon points="1156.4,647.5 1149.2,644.9 1149.2,650.1" fill="#4a4a4a"/>
<polyline points="1125.5,666.5 1156.5,666.5" fill="none" stroke="#828282" stroke-width="1"/>
<polygon points="1156.4,666.5 1149.2,663.9 1149.2,669.1" fill="#4a4a4a"/>
<polyline points="1174.5,639.5 1201.5,639.5" fill="none" stroke="#828282" stroke-width="1"/>
<polygon points="1201.2,639.5 1194,636.9 1194,642.1" fill="#4a4a4a"/>
<rect x="1201.7" y="631.1" width="43.4" height="16.8" fill="#fff" stroke="#a0a0a0" stroke-width="1" />
<text x="1223.4" y="642.27" font-size="7.7" fill="#c6d8ea" text-anchor="middle" textLength="8.95" lengthAdjust="spacingAndGlyphs">64</text>
<text x="1246" y="640.52" font-size="7.0" fill="#8e8e8e" font-weight="700" textLength="58.04" lengthAdjust="spacingAndGlyphs">To LPTIM2 (MHz)</text>
<text x="806.5" y="589.32" font-size="7.0" fill="#8e8e8e" font-weight="700" textLength="54.42" lengthAdjust="spacingAndGlyphs">I2C1 Clock Mux</text>
<polygon points="838.5,598 855.5,609 855.5,668.4 838.5,679.8" fill="#e8ebee" stroke="#8c9298" stroke-width="1"/>
<circle cx="847" cy="611.3" r="4" fill="#fff" stroke="#7c7c7c" stroke-width="0.8"/>
<circle cx="847" cy="611.3" r="1.9" fill="#7c7c7c"/>
<circle cx="847" cy="638" r="4" fill="#fff" stroke="#707070" stroke-width="0.8"/>
<circle cx="847" cy="665" r="4" fill="#fff" stroke="#707070" stroke-width="0.8"/>
<text x="809.3" y="605.52" font-size="7.0" fill="#8a8a8a" textLength="21.2" lengthAdjust="spacingAndGlyphs">PCLK1</text>
<polyline points="811.5,614.5 837.5,614.5" fill="none" stroke="#828282" stroke-width="1"/>
<polygon points="837,614.5 829.8,611.9 829.8,617.1" fill="#4a4a4a"/>
<text x="809.3" y="631.52" font-size="7.0" fill="#8a8a8a" textLength="24.72" lengthAdjust="spacingAndGlyphs">SYSCLK</text>
<polyline points="811.5,640.5 837.5,640.5" fill="none" stroke="#828282" stroke-width="1"/>
<polygon points="837,640.5 829.8,637.9 829.8,643.1" fill="#4a4a4a"/>
<text x="809.3" y="657.52" font-size="7.0" fill="#8a8a8a" textLength="10.97" lengthAdjust="spacingAndGlyphs">HSI</text>
<polyline points="811.5,666.5 837.5,666.5" fill="none" stroke="#828282" stroke-width="1"/>
<polygon points="837,666.5 829.8,663.9 829.8,669.1" fill="#4a4a4a"/>
<polyline points="855.5,639.5 883.5,639.5" fill="none" stroke="#828282" stroke-width="1"/>
<polygon points="883.3,639.5 876.1,636.9 876.1,642.1" fill="#4a4a4a"/>
<rect x="883.8" y="631" width="44" height="16.4" fill="#fff" stroke="#a0a0a0" stroke-width="1" />
<text x="905.8" y="641.97" font-size="7.7" fill="#c6d8ea" text-anchor="middle" textLength="8.95" lengthAdjust="spacingAndGlyphs">64</text>
<text x="929" y="640.82" font-size="7.0" fill="#8e8e8e" font-weight="700" textLength="49.27" lengthAdjust="spacingAndGlyphs">To I2C1 (MHz)</text>
<text x="806.5" y="695.32" font-size="7.0" fill="#8e8e8e" font-weight="700" textLength="54.42" lengthAdjust="spacingAndGlyphs">I2C3 Clock Mux</text>
<polygon points="838.5,704 855.5,715 855.5,774.4 838.5,785.8" fill="#e8ebee" stroke="#8c9298" stroke-width="1"/>
<circle cx="847" cy="717.3" r="4" fill="#fff" stroke="#7c7c7c" stroke-width="0.8"/>
<circle cx="847" cy="717.3" r="1.9" fill="#7c7c7c"/>
<circle cx="847" cy="744" r="4" fill="#fff" stroke="#707070" stroke-width="0.8"/>
<circle cx="847" cy="771" r="4" fill="#fff" stroke="#707070" stroke-width="0.8"/>
<text x="809.3" y="711.52" font-size="7.0" fill="#8a8a8a" textLength="21.2" lengthAdjust="spacingAndGlyphs">PCLK1</text>
<polyline points="811.5,720.5 837.5,720.5" fill="none" stroke="#828282" stroke-width="1"/>
<polygon points="837,720.5 829.8,717.9 829.8,723.1" fill="#4a4a4a"/>
<text x="809.3" y="737.52" font-size="7.0" fill="#8a8a8a" textLength="24.72" lengthAdjust="spacingAndGlyphs">SYSCLK</text>
<polyline points="811.5,746.5 837.5,746.5" fill="none" stroke="#828282" stroke-width="1"/>
<polygon points="837,746.5 829.8,743.9 829.8,749.1" fill="#4a4a4a"/>
<text x="809.3" y="763.52" font-size="7.0" fill="#8a8a8a" textLength="10.97" lengthAdjust="spacingAndGlyphs">HSI</text>
<polyline points="811.5,772.5 837.5,772.5" fill="none" stroke="#828282" stroke-width="1"/>
<polygon points="837,772.5 829.8,769.9 829.8,775.1" fill="#4a4a4a"/>
<polyline points="855.5,745.5 883.5,745.5" fill="none" stroke="#828282" stroke-width="1"/>
<polygon points="883.3,745.5 876.1,742.9 876.1,748.1" fill="#4a4a4a"/>
<rect x="883.8" y="738.8" width="44" height="16.4" fill="#fff" stroke="#a0a0a0" stroke-width="1" />
<text x="905.8" y="749.77" font-size="7.7" fill="#c6d8ea" text-anchor="middle" textLength="8.95" lengthAdjust="spacingAndGlyphs">64</text>
<text x="929" y="746.82" font-size="7.0" fill="#8e8e8e" font-weight="700" textLength="49.27" lengthAdjust="spacingAndGlyphs">To I2C3 (MHz)</text>
<text x="1121.7" y="698.02" font-size="7.0" fill="#8e8e8e" font-weight="700" textLength="61.35" lengthAdjust="spacingAndGlyphs">RFWKP Clock Mux</text>
<rect x="1097.9" y="709.8" width="24.1" height="16.7" fill="#fff" stroke="#8e8e8e" stroke-width="1" />
<text x="1109.95" y="720.74" font-size="7.2" fill="#3a3a3a" text-anchor="middle" textLength="22.13" lengthAdjust="spacingAndGlyphs">/ 1024</text>
<text x="1128.6" y="717.12" font-size="7.0" fill="#8a8a8a" textLength="12.74" lengthAdjust="spacingAndGlyphs">HSE</text>
<polyline points="1122.5,718.5 1154.5,718.5" fill="none" stroke="#828282" stroke-width="1"/>
<polygon points="1154.5,718.5 1147.3,715.9 1147.3,721.1" fill="#4a4a4a"/>
<polygon points="1156.8,705 1174.3,716.8 1174.3,753.6 1156.8,765.2" fill="#e8ebee" stroke="#8c9298" stroke-width="1"/>
<circle cx="1165" cy="724.3" r="4" fill="#fff" stroke="#7c7c7c" stroke-width="0.8"/>
<circle cx="1165" cy="724.3" r="1.9" fill="#7c7c7c"/>
<circle cx="1165" cy="748.6" r="4" fill="#fff" stroke="#707070" stroke-width="0.8"/>
<text x="1128.6" y="743.52" font-size="7.0" fill="#8a8a8a" textLength="11.17" lengthAdjust="spacingAndGlyphs">LSE</text>
<polyline points="1124.5,749.5 1154.5,749.5" fill="none" stroke="#828282" stroke-width="1"/>
<polygon points="1154.5,749.5 1147.3,746.9 1147.3,752.1" fill="#4a4a4a"/>
<polyline points="1174.5,735.5 1201.5,735.5" fill="none" stroke="#828282" stroke-width="1"/>
<polygon points="1201.2,735.5 1194,732.9 1194,738.1" fill="#4a4a4a"/>
<rect x="1201.7" y="728.7" width="43.4" height="16.6" fill="#fff" stroke="#a0a0a0" stroke-width="1" />
<text x="1223.4" y="739.77" font-size="7.7" fill="#c6d8ea" text-anchor="middle" textLength="20.15" lengthAdjust="spacingAndGlyphs">31.25</text>
<text x="1246" y="739.22" font-size="7.0" fill="#8e8e8e" font-weight="700" textLength="95.5" lengthAdjust="spacingAndGlyphs">To RF system wakeup (KHz)</text>
<text x="783.8" y="802.72" font-size="7.0" fill="#8e8e8e" font-weight="700" textLength="53.5" lengthAdjust="spacingAndGlyphs">ADC Clock Mux</text>
<text x="776.5" y="817.82" font-size="7.0" fill="#8a8a8a" textLength="30.48" lengthAdjust="spacingAndGlyphs">PLLSAI1R</text>
<polyline points="783.5,823.5 808.5,823.5" fill="none" stroke="#828282" stroke-width="1"/>
<polygon points="808.5,823.5 801.3,820.9 801.3,826.1" fill="#4a4a4a"/>
<polygon points="810.4,807.5 827.6,818.4 827.6,880 810.4,890" fill="#e8ebee" stroke="#8c9298" stroke-width="1"/>
<circle cx="817.7" cy="822.3" r="4" fill="#fff" stroke="#7c7c7c" stroke-width="0.8"/>
<circle cx="817.7" cy="822.3" r="1.9" fill="#7c7c7c"/>
<text x="1008.7" y="791.82" font-size="7.0" fill="#3a3a3a" font-weight="700" textLength="56.29" lengthAdjust="spacingAndGlyphs">SMPS Clock Mux</text>
<text x="1002.5" y="810.2" font-size="7.0" fill="#1c2c4c" font-weight="700" textLength="12.11" lengthAdjust="spacingAndGlyphs">MSI</text>
<polyline points="1005.5,815.5 1030.5,815.5" fill="none" stroke="#828282" stroke-width="1"/>
<polygon points="1030,815.5 1022.8,812.9 1022.8,818.1" fill="#4a4a4a"/>
<polygon points="1032,800.2 1049,811.4 1049,880 1032,890" fill="#e8ebee" stroke="#8c9298" stroke-width="1"/>
<circle cx="1040.3" cy="815.3" r="4" fill="#fff" stroke="#707070" stroke-width="0.8"/>
<text x="1102.4" y="829.52" font-size="7.0" fill="#3a3a3a" font-weight="700" textLength="31.27" lengthAdjust="spacingAndGlyphs">SMPS Div</text>
<rect x="1201.7" y="829.9" width="43.4" height="15.6" fill="#fff" stroke="#8e8e8e" stroke-width="1" />
<text x="1223.4" y="840.47" font-size="7.7" fill="#3a3a3a" text-anchor="middle"></text>
<rect x="403" y="329" width="364.6" height="285.5" fill="#f6c530" style="mix-blend-mode:multiply"/>
<polygon points="962.34,165.89 929.64,185.98 926.94,181.59 920.7,193.4 934.06,193.18 931.36,188.79 964.06,168.71" fill="#f1b92e" filter="url(#sh)"/>
<polygon points="953.36,418.66 933.32,389.8 937.55,386.87 925.4,381.3 926.37,394.62 930.6,391.69 950.64,420.54" fill="#f1b92e" filter="url(#sh)"/>
<polygon points="411.54,581.27 373.1,637.86 368.84,634.97 368,648.3 380.09,642.61 375.83,639.71 414.26,583.13" fill="#f1b92e" filter="url(#sh)"/>
</g></svg>
 <div id="status" class="a"></div>
 <svg class="a" style="left:1290px;top:836px" width="40" height="21" viewBox="0 0 40 21"><rect x="6.500" y="1.500" width="24" height="16.500" rx="1.500" fill="#474d50" stroke="#9a9fa2" stroke-width=".7" stroke-dasharray="1 1"/><circle cx="13" cy="8" r="2.800" fill="#e8b73a"/><rect x="10" y="9" width="6" height="6" fill="#d9e2ee"/><rect x="14" y="8" width="7" height="7" fill="#b9c9de"/><rect x="15.500" y="10" width="4" height="3.500" fill="#f4f6fa"/><rect x="32" y="5" width="1" height="1.500" fill="#8a8f92"/><rect x="32" y="8.500" width="1" height="1.500" fill="#8a8f92"/><rect x="32" y="12" width="1" height="1.500" fill="#8a8f92"/></svg><svg class="a" style="left:1512px;top:839px" width="18" height="16" viewBox="0 0 18 16"><path d="M2.500,3.500l5-1.500 4,2.500v5.500l-5,1.500-4-2.500z" fill="#8fae93" stroke="#6f8f76" stroke-width=".6"/><circle cx="11" cy="10.500" r="3.200" fill="#e8e8e8"/><circle cx="11" cy="10.500" r="2.500" fill="#d5302a"/><path d="M9.800,9.300l2.400,2.400M12.200,9.300l-2.400,2.400" stroke="#fff" stroke-width=".8"/></svg>
 <svg class="a" style="left:1049px;top:55px" width="14" height="18" viewBox="0 0 14 18"><path d="M2,1.500 L2,13 L4.800,10.500 L6.800,15 L8.600,14.200 L6.600,9.800 L10.300,9.800 Z" fill="#111" stroke="#fff" stroke-width="1"/></svg>
</div>
</body></html>
